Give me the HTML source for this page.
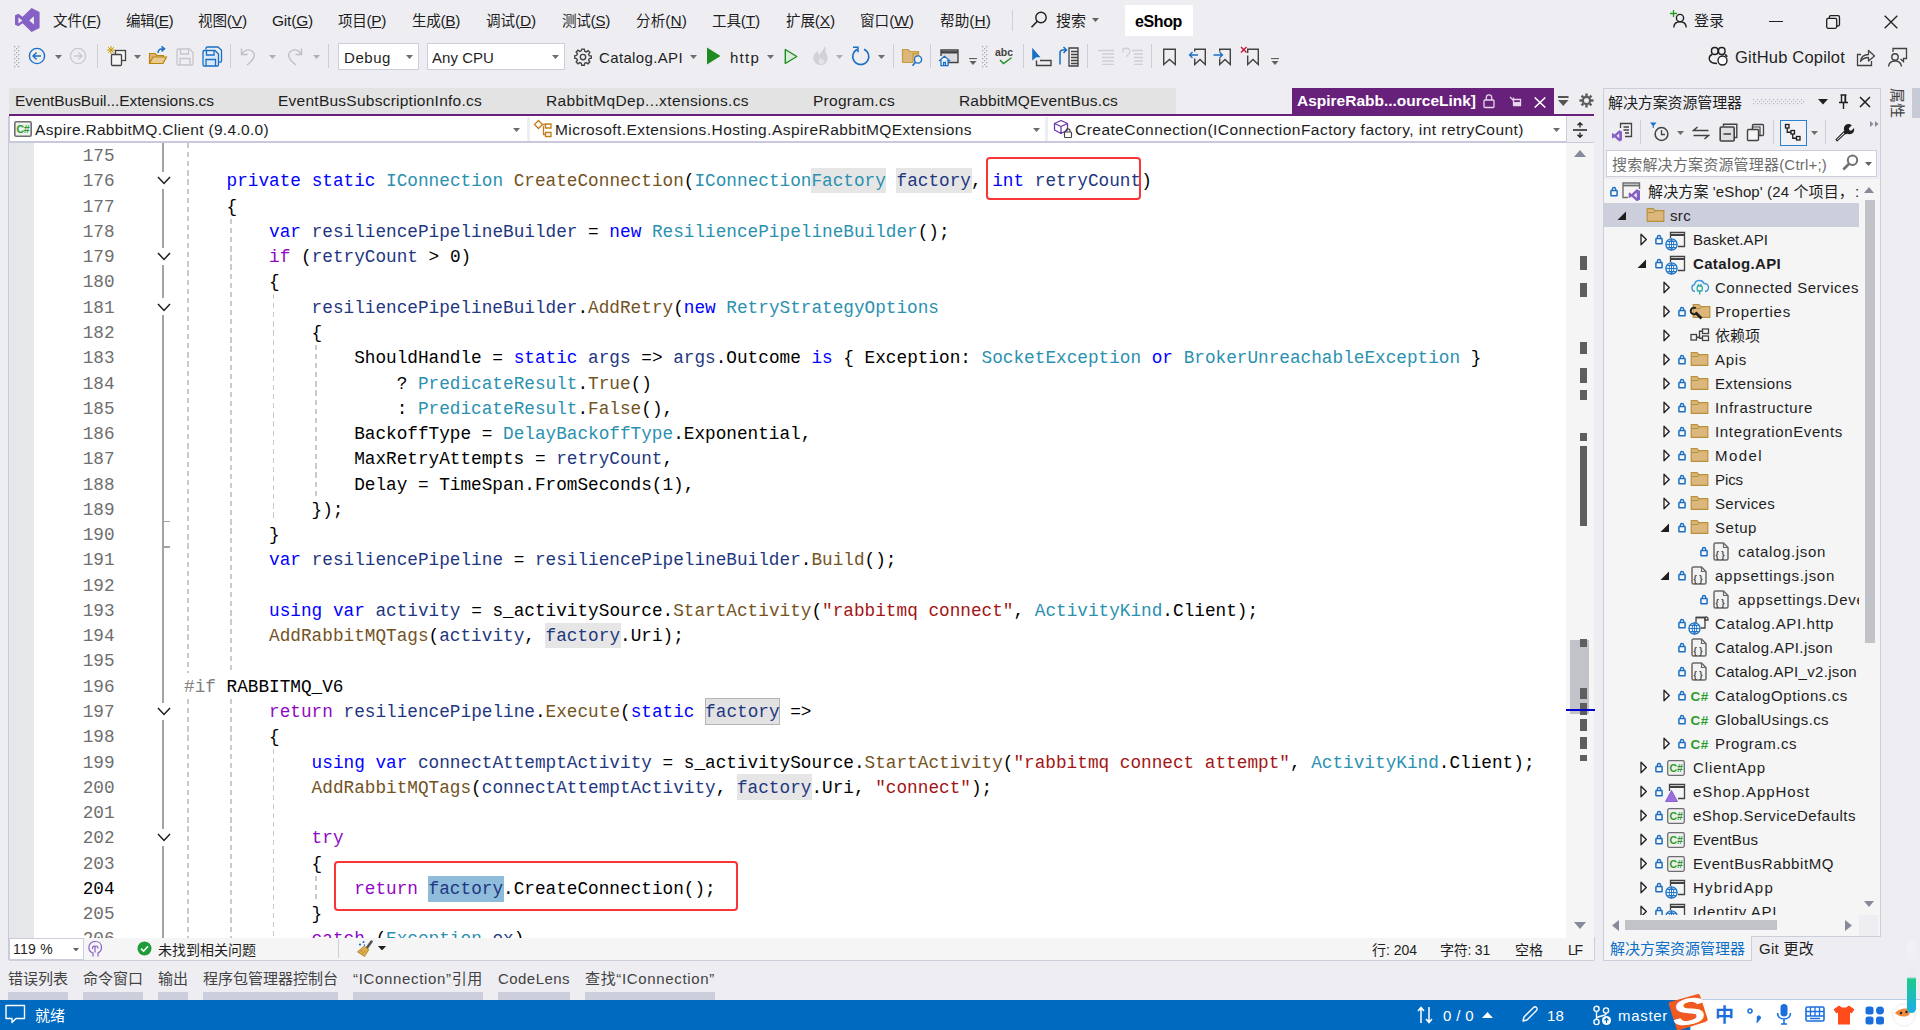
<!DOCTYPE html>
<html lang="zh-CN"><head><meta charset="utf-8"><title>eShop - Microsoft Visual Studio</title><style>
html,body{margin:0;padding:0;}
body{width:1920px;height:1030px;overflow:hidden;background:#EEEEF2;position:relative;font-family:"Liberation Sans","Noto Sans CJK SC",sans-serif;}
.t{position:absolute;white-space:pre;}
.b{position:absolute;display:block;}
.c{position:absolute;white-space:pre;font-family:"Liberation Mono","Noto Sans CJK SC",monospace;font-size:17.725px;line-height:25px;height:25px;color:#000;left:184px;}
.ln{position:absolute;white-space:pre;font-family:"Liberation Mono",monospace;font-size:17.7px;line-height:25px;height:25px;color:#6e6e6e;left:50px;width:65.5px;text-align:right;}
.k{color:#0000ff}.p{color:#8f08c4}.ty{color:#2b91af}.m{color:#74531f}.v{color:#1f377f}.s{color:#a31515}.g{color:#808080}
.hl{background:#e6e6e6}
.clip{position:absolute;overflow:hidden;}
</style></head><body>
<svg class="b" style="left:14.6px;top:7.7px;" width="25" height="24.2" viewBox="0 0 25 24.2"><path d="M16.600 0L24.600 3.900V20.100L16.600 24L7.600 15.300L3.400 18.300L0 16.700V7.300L3.400 5.700L7.600 8.700Z M18.900 8.300L14.300 12.400L18.900 16.500Z M3.400 9.400L7.400 12.400L3.400 15.400Z" fill="#8661c5" fill-rule="evenodd"/></svg>
<span class="t" style="left:53px;top:8.5px;font-size:15.500px;line-height:24px;color:#1e1e1e;letter-spacing:-0.203px;"><span style="font-size:14.600px">文件</span>(<u>F</u>)</span>
<span class="t" style="left:126px;top:8.5px;font-size:15.500px;line-height:24px;color:#1e1e1e;letter-spacing:-0.578px;"><span style="font-size:14.600px">编辑</span>(<u>E</u>)</span>
<span class="t" style="left:198px;top:8.5px;font-size:15.500px;line-height:24px;color:#1e1e1e;letter-spacing:-0.178px;"><span style="font-size:14.600px">视图</span>(<u>V</u>)</span>
<span class="t" style="left:272px;top:8.5px;font-size:15.500px;line-height:24px;color:#1e1e1e;letter-spacing:-0.201px;">Git(<u>G</u>)</span>
<span class="t" style="left:338px;top:8.5px;font-size:15.500px;line-height:24px;color:#1e1e1e;letter-spacing:-0.378px;"><span style="font-size:14.600px">项目</span>(<u>P</u>)</span>
<span class="t" style="left:412px;top:8.5px;font-size:15.500px;line-height:24px;color:#1e1e1e;letter-spacing:-0.378px;"><span style="font-size:14.600px">生成</span>(<u>B</u>)</span>
<span class="t" style="left:486px;top:8.5px;font-size:15.500px;line-height:24px;color:#1e1e1e;letter-spacing:-0.150px;"><span style="font-size:14.600px">调试</span>(<u>D</u>)</span>
<span class="t" style="left:562px;top:8.5px;font-size:15.500px;line-height:24px;color:#1e1e1e;letter-spacing:-0.378px;"><span style="font-size:14.600px">测试</span>(<u>S</u>)</span>
<span class="t" style="left:636px;top:8.5px;font-size:15.500px;line-height:24px;color:#1e1e1e;letter-spacing:0.050px;"><span style="font-size:14.600px">分析</span>(<u>N</u>)</span>
<span class="t" style="left:712px;top:8.5px;font-size:15.500px;line-height:24px;color:#1e1e1e;letter-spacing:-0.203px;"><span style="font-size:14.600px">工具</span>(<u>T</u>)</span>
<span class="t" style="left:786px;top:8.5px;font-size:15.500px;line-height:24px;color:#1e1e1e;letter-spacing:-0.178px;"><span style="font-size:14.600px">扩展</span>(<u>X</u>)</span>
<span class="t" style="left:860px;top:8.5px;font-size:15.500px;line-height:24px;color:#1e1e1e;letter-spacing:-0.037px;"><span style="font-size:14.600px">窗口</span>(<u>W</u>)</span>
<span class="t" style="left:940px;top:8.5px;font-size:15.500px;line-height:24px;color:#1e1e1e;letter-spacing:0.050px;"><span style="font-size:14.600px">帮助</span>(<u>H</u>)</span>
<div class="b" style="left:1012px;top:10px;width:1px;height:21px;background:#d0d0d6;"></div>
<svg class="b" style="left:1030px;top:11px;" width="18" height="18" viewBox="0 0 18 18"><circle cx="11" cy="6.5" r="5.2" fill="none" stroke="#1e1e1e" stroke-width="1.4"/><path d="M7.3 10.3 L1.5 16.3" stroke="#1e1e1e" stroke-width="1.6" fill="none"/></svg>
<span class="t" style="left:1056px;top:8.5px;font-size:15px;line-height:23px;color:#1e1e1e;letter-spacing:-0.008px;">搜索</span>
<svg class="b" style="left:1091.5px;top:18px;" width="7" height="4" viewBox="0 0 7 4"><path d="M0 0H7L3.5 4Z" fill="#616161"/></svg>
<div class="b" style="left:1125px;top:5px;width:68px;height:31px;background:#ffffff;"></div>
<span class="t" style="left:1135px;top:9.7px;font-size:16px;line-height:24px;color:#000;font-weight:bold;letter-spacing:-0.378px;">eShop</span>
<svg class="b" style="left:1669px;top:9px;" width="20" height="20" viewBox="0 0 20 20"><path d="M1 4.5H8M4.5 1V8" stroke="#1f9c1f" stroke-width="1.3"/><circle cx="11" cy="9" r="3.6" fill="none" stroke="#1e1e1e" stroke-width="1.4"/><path d="M4.8 18.5C5 14.6 7.5 12.8 11 12.8S17 14.6 17.2 18.5" fill="none" stroke="#1e1e1e" stroke-width="1.4"/></svg>
<span class="t" style="left:1694px;top:8.5px;font-size:15px;line-height:23px;color:#1e1e1e;letter-spacing:-0.008px;">登录</span>
<div class="b" style="left:1769px;top:21px;width:14px;height:1.3px;background:#1e1e1e;"></div>
<svg class="b" style="left:1826px;top:15px;" width="15" height="15" viewBox="0 0 15 15"><rect x="0.7" y="3.3" width="10" height="10" rx="1.5" fill="none" stroke="#1e1e1e" stroke-width="1.3"/><path d="M3.3 3V2.2A1.5 1.5 0 0 1 4.8 0.7H12A1.5 1.5 0 0 1 13.5 2.2V9.5A1.5 1.5 0 0 1 12 11H11" fill="none" stroke="#1e1e1e" stroke-width="1.3"/></svg>
<svg class="b" style="left:1884px;top:15px;" width="14" height="14" viewBox="0 0 14 14"><path d="M0.7 0.7L13.3 13.3M13.3 0.7L0.7 13.3" stroke="#1e1e1e" stroke-width="1.3"/></svg>
<svg class="b" style="left:14px;top:46px;" width="6" height="22" viewBox="0 0 6 22"><rect x="0" y="0" width="1.300" height="1.300" fill="#a9a9b4"/><rect x="4" y="0" width="1.300" height="1.300" fill="#a9a9b4"/><rect x="2" y="2" width="1.300" height="1.300" fill="#a9a9b4"/><rect x="0" y="4" width="1.300" height="1.300" fill="#a9a9b4"/><rect x="4" y="4" width="1.300" height="1.300" fill="#a9a9b4"/><rect x="2" y="6" width="1.300" height="1.300" fill="#a9a9b4"/><rect x="0" y="8" width="1.300" height="1.300" fill="#a9a9b4"/><rect x="4" y="8" width="1.300" height="1.300" fill="#a9a9b4"/><rect x="2" y="10" width="1.300" height="1.300" fill="#a9a9b4"/><rect x="0" y="12" width="1.300" height="1.300" fill="#a9a9b4"/><rect x="4" y="12" width="1.300" height="1.300" fill="#a9a9b4"/><rect x="2" y="14" width="1.300" height="1.300" fill="#a9a9b4"/><rect x="0" y="16" width="1.300" height="1.300" fill="#a9a9b4"/><rect x="4" y="16" width="1.300" height="1.300" fill="#a9a9b4"/><rect x="2" y="18" width="1.300" height="1.300" fill="#a9a9b4"/><rect x="0" y="20" width="1.300" height="1.300" fill="#a9a9b4"/><rect x="4" y="20" width="1.300" height="1.300" fill="#a9a9b4"/></svg>
<svg class="b" style="left:28px;top:47px;" width="18" height="18" viewBox="0 0 18 18"><circle cx="9" cy="9" r="7.6" fill="none" stroke="#1a6fc4" stroke-width="1.4"/><path d="M13 9H5.3M8.6 5.4L5 9L8.6 12.6" fill="none" stroke="#1a6fc4" stroke-width="1.4"/></svg>
<svg class="b" style="left:54.5px;top:55px;" width="7" height="4" viewBox="0 0 7 4"><path d="M0 0H7L3.5 4Z" fill="#6d6d6d"/></svg>
<svg class="b" style="left:69px;top:47px;" width="18" height="18" viewBox="0 0 18 18"><circle cx="9" cy="9" r="7.6" fill="none" stroke="#c8c8cc" stroke-width="1.3"/><path d="M5 9H12.7M9.4 5.4L13 9L9.4 12.6" fill="none" stroke="#c8c8cc" stroke-width="1.3"/></svg>
<div class="b" style="left:97px;top:44px;width:1px;height:24px;background:#cccedb;"></div>
<svg class="b" style="left:106px;top:45px;" width="22" height="22" viewBox="0 0 22 22"><path d="M5 1V9M1 5H9M2.2 2.2L7.8 7.8M7.8 2.2L2.2 7.8" stroke="#c99700" stroke-width="1"/><rect x="9.5" y="5.5" width="10" height="10" fill="#f5f5f5" stroke="#424242" stroke-width="1.3"/><rect x="5.5" y="9.5" width="10" height="11" rx="1" fill="#f5f5f5" stroke="#424242" stroke-width="1.3"/></svg>
<svg class="b" style="left:133.5px;top:55px;" width="7" height="4" viewBox="0 0 7 4"><path d="M0 0H7L3.5 4Z" fill="#6d6d6d"/></svg>
<svg class="b" style="left:148px;top:46px;" width="21" height="20" viewBox="0 0 21 20"><path d="M1.5 17.5V7.5H7L9 9.5H15.5V11" fill="#dcb67a" stroke="#b8860b" stroke-width="1.2"/><path d="M1.5 17.5L5 11H18.5L15 17.5Z" fill="#e8c98f" stroke="#b8860b" stroke-width="1.2"/><path d="M10 7C10 3.5 12.5 2.5 16 2.7M13.5 0.3L16.5 2.7L13.5 5.4" fill="none" stroke="#1a6fc4" stroke-width="1.5"/></svg>
<svg class="b" style="left:176px;top:48px;" width="18" height="18" viewBox="0 0 18 18"><path d="M1 2.2A1.2 1.2 0 0 1 2.2 1H13.5L17 4.5V15.8A1.2 1.2 0 0 1 15.8 17H2.2A1.2 1.2 0 0 1 1 15.8Z M4.5 1V6H12.5V1 M4 17V10.5H14V17" fill="none" stroke="#c6c6ca" stroke-width="1.3"/></svg>
<svg class="b" style="left:202px;top:46px;" width="21" height="21" viewBox="0 0 21 21"><path d="M4 3.5V2.2A1.2 1.2 0 0 1 5.2 1H16L19.5 4.3V15A1.2 1.2 0 0 1 18.3 16.2H17" fill="none" stroke="#1a6fc4" stroke-width="1.3"/><path d="M1 5.7A1.2 1.2 0 0 1 2.2 4.5H13L16.5 8V18.8A1.2 1.2 0 0 1 15.3 20H2.2A1.2 1.2 0 0 1 1 18.8Z M4.5 4.5V9H12V4.5 M4 20V13.5H13.5V20" fill="#dbe9f7" stroke="#1a6fc4" stroke-width="1.3"/></svg>
<div class="b" style="left:230px;top:44px;width:1px;height:24px;background:#cccedb;"></div>
<svg class="b" style="left:240px;top:47px;" width="18" height="20" viewBox="0 0 18 20"><path d="M1.5 1.5V7.5H7.5M2 7C4 3 9 1.5 12.5 4.5S14.5 12.5 7 18" fill="none" stroke="#c0c0c4" stroke-width="1.4"/></svg>
<svg class="b" style="left:268.5px;top:55px;" width="7" height="4" viewBox="0 0 7 4"><path d="M0 0H7L3.5 4Z" fill="#b0b0b4"/></svg>
<svg class="b" style="left:285px;top:47px;" width="18" height="20" viewBox="0 0 18 20"><path d="M16.5 1.5V7.5H10.5M16 7C14 3 9 1.5 5.5 4.5S3.500 12.500 11 18" fill="none" stroke="#c0c0c4" stroke-width="1.4"/></svg>
<svg class="b" style="left:312.5px;top:55px;" width="7" height="4" viewBox="0 0 7 4"><path d="M0 0H7L3.5 4Z" fill="#b0b0b4"/></svg>
<div class="b" style="left:328px;top:44px;width:1px;height:24px;background:#cccedb;"></div>
<div class="b" style="left:338px;top:43px;width:81px;height:27px;background:#ffffff;border:1px solid #cccedb;box-sizing:border-box;"></div>
<span class="t" style="left:344px;top:45.5px;font-size:15px;line-height:23px;color:#1e1e1e;letter-spacing:0.559px;">Debug</span>
<svg class="b" style="left:405.5px;top:55px;" width="7" height="4" viewBox="0 0 7 4"><path d="M0 0H7L3.5 4Z" fill="#6d6d6d"/></svg>
<div class="b" style="left:427px;top:43px;width:138px;height:27px;background:#ffffff;border:1px solid #cccedb;box-sizing:border-box;"></div>
<span class="t" style="left:432px;top:45.5px;font-size:15px;line-height:23px;color:#1e1e1e;letter-spacing:0.045px;">Any CPU</span>
<svg class="b" style="left:551.5px;top:55px;" width="7" height="4" viewBox="0 0 7 4"><path d="M0 0H7L3.5 4Z" fill="#6d6d6d"/></svg>
<svg class="b" style="left:574px;top:47.5px;" width="18" height="18" viewBox="0 0 20 20"><g fill="none" stroke="#424242" stroke-width="1.5"><circle cx="10" cy="10" r="3"/><path d="M8.6 1.2H11.400L11.900 3.600L13.600 4.300L15.600 2.900L17.600 4.900L16.200 6.900L16.900 8.600L19.200 9V11.400L16.900 11.900L16.200 13.600L17.600 15.600L15.600 17.600L13.600 16.200L11.900 16.900L11.400 19.200H8.600L8.100 16.900L6.400 16.200L4.400 17.600L2.400 15.600L3.800 13.600L3.100 11.900L0.800 11.400V8.600L3.100 8.100L3.800 6.400L2.400 4.400L4.400 2.400L6.400 3.800L8.100 3.100Z"/></g></svg>
<span class="t" style="left:599px;top:45.5px;font-size:15px;line-height:23px;color:#1e1e1e;letter-spacing:0.359px;">Catalog.API</span>
<svg class="b" style="left:689.5px;top:55px;" width="7" height="4" viewBox="0 0 7 4"><path d="M0 0H7L3.5 4Z" fill="#6d6d6d"/></svg>
<svg class="b" style="left:706px;top:47px;" width="16" height="18" viewBox="0 0 16 18"><path d="M1 0.5L14.5 9L1 17.500Z" fill="#1e8c1e"/></svg>
<span class="t" style="left:730px;top:45.5px;font-size:15px;line-height:23px;color:#1e1e1e;letter-spacing:1.242px;">http</span>
<svg class="b" style="left:766.5px;top:55px;" width="7" height="4" viewBox="0 0 7 4"><path d="M0 0H7L3.5 4Z" fill="#6d6d6d"/></svg>
<svg class="b" style="left:784px;top:48px;" width="15" height="17" viewBox="0 0 15 17"><path d="M1.300 1.500L12.800 8.500L1.300 15.500Z" fill="#d9ecd9" stroke="#1e8c1e" stroke-width="1.400" stroke-linejoin="round"/></svg>
<svg class="b" style="left:810px;top:45px;" width="22" height="22" viewBox="0 0 22 22"><path d="M14 1C15 5 10 6.500 9.500 10C7.500 8.500 8 6.500 8.500 5.500C4.500 8 2.500 11.500 3.500 15C4.500 18.500 8 20.500 11.500 20C15.500 19.500 18.500 16 17.500 11.500C17 9 15.500 8 15.500 6C15.500 4 16 3 14 1Z" fill="#d2d2d6"/><path d="M10 13C8 15 8.500 18 11 19C13.500 19 15 17 14 14.500C13 15.500 12 15 12 13.500C11.500 13.500 10.500 13.500 10 13Z" fill="#e4e4e8"/></svg>
<svg class="b" style="left:835.5px;top:55px;" width="7" height="4" viewBox="0 0 7 4"><path d="M0 0H7L3.5 4Z" fill="#b0b0b4"/></svg>
<svg class="b" style="left:850px;top:46px;" width="22" height="21" viewBox="0 0 22 21"><path d="M7.5 3.200A8 8 0 1 0 14 3.200" fill="none" stroke="#1a6fc4" stroke-width="1.5"/><path d="M3 1.200H8V6.200" fill="none" stroke="#1a6fc4" stroke-width="1.5"/></svg>
<svg class="b" style="left:877.5px;top:55px;" width="7" height="4" viewBox="0 0 7 4"><path d="M0 0H7L3.5 4Z" fill="#6d6d6d"/></svg>
<div class="b" style="left:893px;top:44px;width:1px;height:24px;background:#cccedb;"></div>
<svg class="b" style="left:901px;top:47px;" width="23" height="20" viewBox="0 0 23 20"><path d="M1.5 15.500V2.500H7L9 4.500H17.500V9" fill="#dcb67a" stroke="#c49a3c" stroke-width="1.2"/><path d="M1.500 15.500H12V6.500H17.500" fill="#dcb67a" stroke="#c49a3c" stroke-width="1.200"/><circle cx="17" cy="12.500" r="3.600" fill="#eeeef2" stroke="#1a6fc4" stroke-width="1.400"/><path d="M14.500 15.300L11.500 18.800" stroke="#1a6fc4" stroke-width="1.600"/></svg>
<div class="b" style="left:930px;top:44px;width:1px;height:24px;background:#cccedb;"></div>
<svg class="b" style="left:938px;top:47px;" width="22" height="20" viewBox="0 0 22 20"><path d="M9 15.500H20V3H3V9" fill="#dcdce0" stroke="#424242" stroke-width="1.400"/><path d="M3 5.300H20" stroke="#424242" stroke-width="2.400"/><path d="M1 14L6.500 9.300L12 14M3 13V18.700H10V13M5.500 18.700V15.500H7.500V18.700" fill="#fff" stroke="#1a6fc4" stroke-width="1.300"/></svg>
<svg class="b" style="left:968.5px;top:58px;" width="8" height="8" viewBox="0 0 8 8"><path d="M0 0.500H8" stroke="#616161" stroke-width="1.2"/><path d="M0.500 3H7.500L4 7Z" fill="#616161"/></svg>
<svg class="b" style="left:982px;top:46px;" width="6" height="22" viewBox="0 0 6 22"><rect x="0" y="0" width="1.300" height="1.300" fill="#a9a9b4"/><rect x="4" y="0" width="1.300" height="1.300" fill="#a9a9b4"/><rect x="2" y="2" width="1.300" height="1.300" fill="#a9a9b4"/><rect x="0" y="4" width="1.300" height="1.300" fill="#a9a9b4"/><rect x="4" y="4" width="1.300" height="1.300" fill="#a9a9b4"/><rect x="2" y="6" width="1.300" height="1.300" fill="#a9a9b4"/><rect x="0" y="8" width="1.300" height="1.300" fill="#a9a9b4"/><rect x="4" y="8" width="1.300" height="1.300" fill="#a9a9b4"/><rect x="2" y="10" width="1.300" height="1.300" fill="#a9a9b4"/><rect x="0" y="12" width="1.300" height="1.300" fill="#a9a9b4"/><rect x="4" y="12" width="1.300" height="1.300" fill="#a9a9b4"/><rect x="2" y="14" width="1.300" height="1.300" fill="#a9a9b4"/><rect x="0" y="16" width="1.300" height="1.300" fill="#a9a9b4"/><rect x="4" y="16" width="1.300" height="1.300" fill="#a9a9b4"/><rect x="2" y="18" width="1.300" height="1.300" fill="#a9a9b4"/><rect x="0" y="20" width="1.300" height="1.300" fill="#a9a9b4"/><rect x="4" y="20" width="1.300" height="1.300" fill="#a9a9b4"/></svg>
<span class="t" style="left:995px;top:42.75px;font-size:10.5px;line-height:18.5px;color:#424242;font-weight:bold;letter-spacing:-0.031px;">abc</span>
<svg class="b" style="left:999px;top:57px;" width="14" height="8" viewBox="0 0 14 8"><path d="M1 3L4.500 6.500L12.500 0.800" fill="none" stroke="#1e8c1e" stroke-width="1.400"/></svg>
<div class="b" style="left:1023px;top:44px;width:1px;height:24px;background:#cccedb;"></div>
<svg class="b" style="left:1031px;top:47px;" width="22" height="20" viewBox="0 0 22 20"><path d="M1.500 1V13L4.800 10L8 15.500" fill="none" stroke="#1a6fc4" stroke-width="0"/><path d="M1.200 0.800L9.500 10.200L5.300 10.200L1.200 13.500Z" fill="#1a6fc4"/><path d="M5.500 13.500V18.500H20V13.500H9" fill="none" stroke="#424242" stroke-width="1.400"/></svg>
<svg class="b" style="left:1058px;top:46px;" width="22" height="21" viewBox="0 0 22 21"><path d="M2 18.500V7A3 3 0 0 1 5 4H8M5.500 1L8.500 4L5.500 7" fill="none" stroke="#1a6fc4" stroke-width="1.500"/><path d="M11 2H20V20H11Z" fill="none" stroke="#424242" stroke-width="1.3"/><path d="M13 5.500H20M13 8.500H20M13 11.500H20M13 14.500H20M13 17.500H20" stroke="#424242" stroke-width="1.300"/></svg>
<div class="b" style="left:1087px;top:44px;width:1px;height:24px;background:#cccedb;"></div>
<svg class="b" style="left:1097px;top:49px;" width="18" height="16" viewBox="0 0 18 16"><path d="M1 1.500H17M5 5H17M5 8.500H17M5 12H17M5 15.300H17" stroke="#d0d0d4" stroke-width="1.300"/></svg>
<svg class="b" style="left:1122px;top:47px;" width="21" height="18" viewBox="0 0 21 18"><path d="M1 5.500V1.500M1 1.500H5M1.500 2C4 0.500 7.500 1 8 4C8.300 6.500 6 7.500 4.500 9.500" fill="none" stroke="#d0d0d4" stroke-width="1.300"/><path d="M10 3.500H21M12 7H21M12 10.500H21M12 14H21M12 17.300H21" stroke="#d0d0d4" stroke-width="1.300"/></svg>
<div class="b" style="left:1151px;top:44px;width:1px;height:24px;background:#cccedb;"></div>
<svg class="b" style="left:1162px;top:48px;" width="15" height="18" viewBox="0 0 15 18"><path d="M1.700 1.200H13.300V16.500L7.500 11.500L1.700 16.500Z" fill="none" stroke="#424242" stroke-width="1.400"/></svg>
<svg class="b" style="left:1188px;top:48px;" width="19" height="18" viewBox="0 0 19 18"><path d="M6.700 3.500V1.200H17.300V16.500L12 11.500L6.700 16.500V10.500" fill="none" stroke="#424242" stroke-width="1.400"/><path d="M10 7H1.500M4.500 4L1.500 7L4.500 10" fill="none" stroke="#1a6fc4" stroke-width="1.300"/></svg>
<svg class="b" style="left:1213px;top:48px;" width="19" height="18" viewBox="0 0 19 18"><path d="M6.700 3.500V1.200H17.300V16.500L12 11.500L6.700 16.500V10.500" fill="none" stroke="#424242" stroke-width="1.400"/><path d="M0.500 7H9.500M6.500 4L9.500 7L6.500 10" fill="none" stroke="#1a6fc4" stroke-width="1.300"/></svg>
<svg class="b" style="left:1240px;top:46px;" width="20" height="20" viewBox="0 0 20 20"><path d="M7.700 7V3.200H18.300V18.500L13 13.500L7.700 18.500V9.500" fill="none" stroke="#424242" stroke-width="1.400"/><path d="M1 1L6.500 6.500M6.500 1L1 6.500" stroke="#c8102e" stroke-width="1.300"/></svg>
<svg class="b" style="left:1271px;top:58px;" width="8" height="8" viewBox="0 0 8 8"><path d="M0 0.500H8" stroke="#616161" stroke-width="1.2"/><path d="M0.500 3H7.500L4 7Z" fill="#616161"/></svg>
<svg class="b" style="left:1708px;top:46px;" width="22" height="21" viewBox="0 0 22 21"><g fill="none" stroke="#1e1e1e" stroke-width="1.400"><path d="M4 8.500C1.500 9.500 1 12 1.500 14C2.500 16.500 6 17.500 9 17.500"/><rect x="3.500" y="1.500" width="6.500" height="7" rx="3"/><rect x="10.500" y="1.500" width="6.500" height="7" rx="3"/><path d="M17 8.500C18.500 9 19 10 19 11"/></g><circle cx="14.500" cy="14.500" r="4.500" fill="#fff" stroke="#1e1e1e" stroke-width="1.400"/></svg>
<span class="t" style="left:1735px;top:44.75px;font-size:16.5px;line-height:24.5px;color:#1e1e1e;letter-spacing:0.192px;">GitHub Copilot</span>
<svg class="b" style="left:1856px;top:48px;" width="20" height="19" viewBox="0 0 20 19"><path d="M5 6.500H1.500V17.500H15.500V13" fill="none" stroke="#424242" stroke-width="1.300"/><path d="M4.500 13.500C5 9 8 6.500 12.500 6.500V2.500L18.500 8L12.500 13V9.500C9 9.500 6.500 10.500 4.500 13.500Z" fill="none" stroke="#424242" stroke-width="1.300" stroke-linejoin="round"/></svg>
<svg class="b" style="left:1887px;top:47px;" width="21" height="21" viewBox="0 0 21 21"><path d="M6 5V1.500H19.500V11.500H16.500V14.500L13.500 12" fill="none" stroke="#424242" stroke-width="1.300"/><circle cx="8" cy="10" r="3.200" fill="none" stroke="#424242" stroke-width="1.400"/><path d="M1.500 19.500C2 15.500 4.500 14 8 14S14 15.500 14.500 19.500" fill="none" stroke="#424242" stroke-width="1.400"/></svg>
<div class="b" style="left:9px;top:88px;width:1167px;height:26px;background:#e3e3e3;"></div>
<span class="t" style="left:15px;top:89.05px;font-size:15.5px;line-height:23.5px;color:#1e1e1e;letter-spacing:-0.062px;">EventBusBuil...Extensions.cs</span>
<span class="t" style="left:278px;top:89.05px;font-size:15.5px;line-height:23.5px;color:#1e1e1e;letter-spacing:0.248px;">EventBusSubscriptionInfo.cs</span>
<span class="t" style="left:546px;top:89.05px;font-size:15.5px;line-height:23.5px;color:#1e1e1e;letter-spacing:0.385px;">RabbitMqDep...xtensions.cs</span>
<span class="t" style="left:813px;top:89.05px;font-size:15.5px;line-height:23.5px;color:#1e1e1e;letter-spacing:0.275px;">Program.cs</span>
<span class="t" style="left:959px;top:89.05px;font-size:15.5px;line-height:23.5px;color:#1e1e1e;letter-spacing:0.161px;">RabbitMQEventBus.cs</span>
<div class="b" style="left:1292px;top:87.7px;width:262px;height:27px;background:#68217a;"></div>
<span class="t" style="left:1297px;top:89.25px;font-size:15.5px;line-height:23.5px;color:#ffffff;font-weight:bold;letter-spacing:-0.007px;">AspireRabb...ourceLink]</span>
<svg class="b" style="left:1482px;top:93px;" width="14" height="16" viewBox="0 0 14 16"><rect x="2" y="7" width="10" height="7.500" rx="1" fill="none" stroke="#e6d6ec" stroke-width="1.300"/><path d="M4.300 7V4.500A2.700 2.700 0 0 1 9.700 4.500V7" fill="none" stroke="#e6d6ec" stroke-width="1.300"/></svg>
<svg class="b" style="left:1508px;top:96px;" width="14" height="11" viewBox="0 0 14 11"><path d="M2 1L5.500 4.500" stroke="#e6d6ec" stroke-width="1.200"/><path d="M5.500 1.500V10M5.500 3.500H12.500V9.500H5.500" fill="none" stroke="#e6d6ec" stroke-width="1.300"/><path d="M5.500 6H12.500V9.500H5.500Z" fill="#e6d6ec"/></svg>
<svg class="b" style="left:1534px;top:96.5px;" width="12" height="11" viewBox="0 0 12 11"><path d="M0.700 0.500L11.300 10.500M11.300 0.500L0.700 10.500" stroke="#ffffff" stroke-width="1.500"/></svg>
<div class="b" style="left:9px;top:113.8px;width:1585px;height:2.3px;background:#68217a;"></div>
<svg class="b" style="left:1558px;top:96px;" width="11" height="10" viewBox="0 0 11 10"><path d="M0 1H10.500" stroke="#555" stroke-width="2"/><path d="M0 4H10.500L5.250 10Z" fill="#555"/></svg>
<svg class="b" style="left:1578.5px;top:92.5px;" width="15" height="15" viewBox="0 0 15 15"><g fill="none" stroke="#5c5c5c"><circle cx="7.500" cy="7.500" r="3.600" stroke-width="2.200"/><path d="M7.500 0.500V3M7.500 12V14.500M0.500 7.500H3M12 7.500H14.500M2.550 2.550L4.300 4.300M10.700 10.700L12.450 12.450M12.450 2.550L10.700 4.300M4.300 10.700L2.550 12.450" stroke-width="2.400"/></g></svg>
<div class="b" style="left:9px;top:116px;width:1585px;height:26px;background:#ffffff;"></div>
<div class="b" style="left:9px;top:140.7px;width:1585px;height:2.4px;background:#c8cadc;"></div>
<div class="b" style="left:8px;top:116px;width:1.5px;height:844px;background:#c8cadc;"></div>
<svg class="b" style="left:14px;top:121px;" width="18" height="16" viewBox="0 0 18 16"><rect x="0.800" y="0.800" width="16.400" height="14.400" rx="1.500" fill="#f0f0f0" stroke="#6e6e6e" stroke-width="1.600"/></svg>
<span class="t" style="left:16.5px;top:119.75px;font-size:10.5px;line-height:18.5px;color:#2a9c2a;font-weight:bold;letter-spacing:-0.219px;">C#</span>
<span class="t" style="left:35px;top:117.75px;font-size:15.5px;line-height:23.5px;color:#1e1e1e;letter-spacing:0.313px;">Aspire.RabbitMQ.Client (9.4.0.0)</span>
<svg class="b" style="left:512.5px;top:127.5px;" width="7" height="4" viewBox="0 0 7 4"><path d="M0 0H7L3.5 4Z" fill="#6d6d6d"/></svg>
<div class="b" style="left:526.5px;top:117px;width:3px;height:24px;background:#eeeef2;"></div>
<svg class="b" style="left:533px;top:119px;" width="20" height="20" viewBox="0 0 20 20"><g fill="none" stroke="#c27d1a" stroke-width="1.300"><path d="M5.500 1.500L9.500 5.500L5.500 9.500L1.500 5.500Z"/><path d="M12.500 5H18V9H12.500ZM12.500 13.500H18V17.500H12.500Z"/><path d="M9.500 5.500H12.500M10.500 7V15.500H12.500"/></g></svg>
<span class="t" style="left:555px;top:117.75px;font-size:15.5px;line-height:23.5px;color:#1e1e1e;letter-spacing:0.440px;">Microsoft.Extensions.Hosting.AspireRabbitMQExtensions</span>
<svg class="b" style="left:1032.5px;top:127.5px;" width="7" height="4" viewBox="0 0 7 4"><path d="M0 0H7L3.5 4Z" fill="#6d6d6d"/></svg>
<div class="b" style="left:1045.3px;top:117px;width:3px;height:24px;background:#eeeef2;"></div>
<svg class="b" style="left:1053px;top:119px;" width="20" height="20" viewBox="0 0 20 20"><path d="M8 1.500L14.500 4.500V11L8 14.500L1.500 11V4.500Z M1.500 4.500L8 7.500L14.500 4.500M8 7.500V14.500" fill="none" stroke="#6936aa" stroke-width="1.300" stroke-linejoin="round"/><rect x="11.500" y="13" width="7" height="5.500" rx="0.800" fill="#fff" stroke="#424242" stroke-width="1.200"/><path d="M13 13V11.800A2 2 0 0 1 17 11.800V13" fill="none" stroke="#424242" stroke-width="1.200"/></svg>
<span class="t" style="left:1075px;top:117.75px;font-size:15.5px;line-height:23.5px;color:#1e1e1e;letter-spacing:0.467px;">CreateConnection(IConnectionFactory factory, int retryCount)</span>
<svg class="b" style="left:1552.5px;top:127.5px;" width="7" height="4" viewBox="0 0 7 4"><path d="M0 0H7L3.5 4Z" fill="#6d6d6d"/></svg>
<div class="b" style="left:1566px;top:116px;width:28px;height:26px;background:#eeeef2;"></div>
<div class="b" style="left:1566px;top:116px;width:1px;height:26px;background:#cccedb;"></div>
<svg class="b" style="left:1572px;top:121.5px;" width="16" height="16" viewBox="0 0 16 16"><path d="M1 8H15" stroke="#1e1e1e" stroke-width="1.500"/><path d="M8 0.800V5.500M5.500 3.300L8 0.800L10.500 3.300M8 15.200V10.500M5.500 12.700L8 15.200L10.500 12.700" fill="none" stroke="#1e1e1e" stroke-width="1.300"/></svg>
<div class="clip" style="left:9px;top:143px;width:1557px;height:795px;background:#fff;">
<div class="b" style="left:0px;top:0px;width:25px;height:800px;background:#e6e7e8;"></div>
<div class="b" style="left:153.3px;top:0px;width:1.6px;height:800px;background:#a3a3a3;"></div>
<div class="b" style="left:178.4px;top:-0.3px;width:1.500px;height:530.67px;background:repeating-linear-gradient(to bottom,#cacaca 0,#cacaca 5.200px,transparent 5.200px,transparent 9.100px);"></div>
<div class="b" style="left:178.4px;top:555.64px;width:1.500px;height:277.97px;background:repeating-linear-gradient(to bottom,#cacaca 0,#cacaca 5.200px,transparent 5.200px,transparent 9.100px);"></div>
<div class="b" style="left:221.4px;top:75.51px;width:1.500px;height:454.86px;background:repeating-linear-gradient(to bottom,#cacaca 0,#cacaca 5.200px,transparent 5.200px,transparent 9.100px);"></div>
<div class="b" style="left:221.4px;top:555.64px;width:1.500px;height:277.97px;background:repeating-linear-gradient(to bottom,#cacaca 0,#cacaca 5.200px,transparent 5.200px,transparent 9.100px);"></div>
<div class="b" style="left:263.6px;top:151.32px;width:1.500px;height:227.43px;background:repeating-linear-gradient(to bottom,#cacaca 0,#cacaca 5.200px,transparent 5.200px,transparent 9.100px);"></div>
<div class="b" style="left:263.6px;top:606.18px;width:1.500px;height:227.43px;background:repeating-linear-gradient(to bottom,#cacaca 0,#cacaca 5.200px,transparent 5.200px,transparent 9.100px);"></div>
<div class="b" style="left:306.3px;top:201.86px;width:1.500px;height:151.62px;background:repeating-linear-gradient(to bottom,#cacaca 0,#cacaca 5.200px,transparent 5.200px,transparent 9.100px);"></div>
<div class="b" style="left:306.3px;top:732.53px;width:1.500px;height:25.27px;background:repeating-linear-gradient(to bottom,#cacaca 0,#cacaca 5.200px,transparent 5.200px,transparent 9.100px);"></div>
<div class="b" style="left:802.224px;top:24.97px;width:75.252px;height:24.7px;background:#e6e6e6;"></div>
<div class="b" style="left:887.312px;top:24.97px;width:75.252px;height:24.7px;background:#e6e6e6;"></div>
<div class="b" style="left:536.324px;top:479.83px;width:75.252px;height:25.1px;background:#e6e6e6;"></div>
<div class="b" style="left:695.864px;top:554.94px;width:75.252px;height:26.6px;background:#e2e2e2;box-sizing:border-box;border:1px solid #b4b4b4;"></div>
<div class="b" style="left:727.772px;top:631.45px;width:75.252px;height:25.1px;background:#e6e6e6;"></div>
<div class="b" style="left:419.328px;top:732.53px;width:75.252px;height:26px;background:#8fbcdb;"></div>
<div class="ln" style="top:1px;left:40px;">175</div>
<div class="ln" style="top:26px;left:40px;">176</div>
<div class="c" style="top:26px;left:175px;">    <span class="k">private</span> <span class="k">static</span> <span class="ty">IConnection</span> <span class="m">CreateConnection</span>(<span class="ty">IConnectionFactory</span> <span class="v">factory</span>, <span class="k">int</span> <span class="v">retryCount</span>)</div>
<div class="ln" style="top:52px;left:40px;">177</div>
<div class="c" style="top:52px;left:175px;">    {</div>
<div class="ln" style="top:77px;left:40px;">178</div>
<div class="c" style="top:77px;left:175px;">        <span class="k">var</span> <span class="v">resiliencePipelineBuilder</span> = <span class="k">new</span> <span class="ty">ResiliencePipelineBuilder</span>();</div>
<div class="ln" style="top:102px;left:40px;">179</div>
<div class="c" style="top:102px;left:175px;">        <span class="p">if</span> (<span class="v">retryCount</span> &gt; 0)</div>
<div class="ln" style="top:127px;left:40px;">180</div>
<div class="c" style="top:127px;left:175px;">        {</div>
<div class="ln" style="top:153px;left:40px;">181</div>
<div class="c" style="top:153px;left:175px;">            <span class="v">resiliencePipelineBuilder</span>.<span class="m">AddRetry</span>(<span class="k">new</span> <span class="ty">RetryStrategyOptions</span></div>
<div class="ln" style="top:178px;left:40px;">182</div>
<div class="c" style="top:178px;left:175px;">            {</div>
<div class="ln" style="top:203px;left:40px;">183</div>
<div class="c" style="top:203px;left:175px;">                ShouldHandle = <span class="k">static</span> <span class="v">args</span> =&gt; <span class="v">args</span>.Outcome <span class="k">is</span> { Exception: <span class="ty">SocketException</span> <span class="k">or</span> <span class="ty">BrokerUnreachableException</span> }</div>
<div class="ln" style="top:229px;left:40px;">184</div>
<div class="c" style="top:229px;left:175px;">                    ? <span class="ty">PredicateResult</span>.<span class="m">True</span>()</div>
<div class="ln" style="top:254px;left:40px;">185</div>
<div class="c" style="top:254px;left:175px;">                    : <span class="ty">PredicateResult</span>.<span class="m">False</span>(),</div>
<div class="ln" style="top:279px;left:40px;">186</div>
<div class="c" style="top:279px;left:175px;">                BackoffType = <span class="ty">DelayBackoffType</span>.Exponential,</div>
<div class="ln" style="top:304px;left:40px;">187</div>
<div class="c" style="top:304px;left:175px;">                MaxRetryAttempts = <span class="v">retryCount</span>,</div>
<div class="ln" style="top:330px;left:40px;">188</div>
<div class="c" style="top:330px;left:175px;">                Delay = TimeSpan.FromSeconds(1),</div>
<div class="ln" style="top:355px;left:40px;">189</div>
<div class="c" style="top:355px;left:175px;">            });</div>
<div class="ln" style="top:380px;left:40px;">190</div>
<div class="c" style="top:380px;left:175px;">        }</div>
<div class="ln" style="top:405px;left:40px;">191</div>
<div class="c" style="top:405px;left:175px;">        <span class="k">var</span> <span class="v">resiliencePipeline</span> = <span class="v">resiliencePipelineBuilder</span>.<span class="m">Build</span>();</div>
<div class="ln" style="top:431px;left:40px;">192</div>
<div class="ln" style="top:456px;left:40px;">193</div>
<div class="c" style="top:456px;left:175px;">        <span class="k">using</span> <span class="k">var</span> <span class="v">activity</span> = s_activitySource.<span class="m">StartActivity</span>(<span class="s">"rabbitmq connect"</span>, <span class="ty">ActivityKind</span>.Client);</div>
<div class="ln" style="top:481px;left:40px;">194</div>
<div class="c" style="top:481px;left:175px;">        <span class="m">AddRabbitMQTags</span>(<span class="v">activity</span>, <span class="v">factory</span>.Uri);</div>
<div class="ln" style="top:506px;left:40px;">195</div>
<div class="ln" style="top:532px;left:40px;">196</div>
<div class="c" style="top:532px;left:175px;"><span class="g">#if</span> RABBITMQ_V6</div>
<div class="ln" style="top:557px;left:40px;">197</div>
<div class="c" style="top:557px;left:175px;">        <span class="p">return</span> <span class="v">resiliencePipeline</span>.<span class="m">Execute</span>(<span class="k">static</span> <span class="v">factory</span> =&gt;</div>
<div class="ln" style="top:582px;left:40px;">198</div>
<div class="c" style="top:582px;left:175px;">        {</div>
<div class="ln" style="top:608px;left:40px;">199</div>
<div class="c" style="top:608px;left:175px;">            <span class="k">using</span> <span class="k">var</span> <span class="v">connectAttemptActivity</span> = s_activitySource.<span class="m">StartActivity</span>(<span class="s">"rabbitmq connect attempt"</span>, <span class="ty">ActivityKind</span>.Client);</div>
<div class="ln" style="top:633px;left:40px;">200</div>
<div class="c" style="top:633px;left:175px;">            <span class="m">AddRabbitMQTags</span>(<span class="v">connectAttemptActivity</span>, <span class="v">factory</span>.Uri, <span class="s">"connect"</span>);</div>
<div class="ln" style="top:658px;left:40px;">201</div>
<div class="ln" style="top:683px;left:40px;">202</div>
<div class="c" style="top:683px;left:175px;">            <span class="p">try</span></div>
<div class="ln" style="top:709px;left:40px;">203</div>
<div class="c" style="top:709px;left:175px;">            {</div>
<div class="ln" style="top:734px;left:40px;color:#000;">204</div>
<div class="c" style="top:734px;left:175px;">                <span class="p">return</span> <span class="v">factory</span>.CreateConnection();</div>
<div class="ln" style="top:759px;left:40px;">205</div>
<div class="c" style="top:759px;left:175px;">            }</div>
<div class="ln" style="top:784px;left:40px;">206</div>
<div class="c" style="top:784px;left:175px;">            <span class="p">catch</span> (<span class="ty">Exception</span> <span class="v">ex</span>)</div>
<div class="b" style="left:149px;top:28.97px;width:11px;height:17px;background:#ffffff;"></div>
<svg class="b" style="left:147.5px;top:33.47px" width="14" height="9" viewBox="0 0 14 9"><path d="M1 1L7 7.500L13 1" fill="none" stroke="#1e1e1e" stroke-width="1.500"/></svg>
<div class="b" style="left:149px;top:104.78px;width:11px;height:17px;background:#ffffff;"></div>
<svg class="b" style="left:147.5px;top:109.28px" width="14" height="9" viewBox="0 0 14 9"><path d="M1 1L7 7.500L13 1" fill="none" stroke="#1e1e1e" stroke-width="1.500"/></svg>
<div class="b" style="left:149px;top:155.32px;width:11px;height:17px;background:#ffffff;"></div>
<svg class="b" style="left:147.5px;top:159.82px" width="14" height="9" viewBox="0 0 14 9"><path d="M1 1L7 7.500L13 1" fill="none" stroke="#1e1e1e" stroke-width="1.500"/></svg>
<div class="b" style="left:149px;top:559.64px;width:11px;height:17px;background:#ffffff;"></div>
<svg class="b" style="left:147.5px;top:564.14px" width="14" height="9" viewBox="0 0 14 9"><path d="M1 1L7 7.500L13 1" fill="none" stroke="#1e1e1e" stroke-width="1.500"/></svg>
<div class="b" style="left:149px;top:685.99px;width:11px;height:17px;background:#ffffff;"></div>
<svg class="b" style="left:147.5px;top:690.49px" width="14" height="9" viewBox="0 0 14 9"><path d="M1 1L7 7.500L13 1" fill="none" stroke="#1e1e1e" stroke-width="1.500"/></svg>
<div class="b" style="left:154px;top:377.95px;width:7px;height:1.4px;background:#a3a3a3;"></div>
<div class="b" style="left:154px;top:403.22px;width:7px;height:1.4px;background:#a3a3a3;"></div>
<div class="b" style="left:977px;top:14.3px;width:155.3px;height:42.5px;border:2.500px solid #fb3535;border-radius:4px;box-sizing:border-box;"></div>
<div class="b" style="left:325.3px;top:718px;width:403.6px;height:50.4px;border:2.500px solid #fb3535;border-radius:4px;box-sizing:border-box;"></div>
</div>
<div class="b" style="left:1566px;top:143px;width:28px;height:795px;background:#f5f5f5;"></div>
<svg class="b" style="left:1574px;top:150px;" width="12" height="7" viewBox="0 0 12 7"><path d="M0 7L6 0L12 7Z" fill="#868999"/></svg>
<svg class="b" style="left:1574px;top:922px;" width="12" height="7" viewBox="0 0 12 7"><path d="M0 0H12L6 7Z" fill="#868999"/></svg>
<div class="b" style="left:1570px;top:640px;width:19px;height:74px;background:#c2c3c9;"></div>
<div class="b" style="left:1580px;top:256px;width:7px;height:14px;background:#5e5e5e;"></div>
<div class="b" style="left:1580px;top:283px;width:7px;height:14px;background:#5e5e5e;"></div>
<div class="b" style="left:1580px;top:342px;width:7px;height:12px;background:#5e5e5e;"></div>
<div class="b" style="left:1580px;top:368px;width:7px;height:15px;background:#5e5e5e;"></div>
<div class="b" style="left:1580px;top:390px;width:7px;height:10px;background:#5e5e5e;"></div>
<div class="b" style="left:1580px;top:433px;width:7px;height:8px;background:#5e5e5e;"></div>
<div class="b" style="left:1580px;top:446px;width:7px;height:80px;background:#5e5e5e;"></div>
<div class="b" style="left:1580px;top:639px;width:7px;height:8px;background:#5e5e5e;"></div>
<div class="b" style="left:1580px;top:688px;width:7px;height:11px;background:#5e5e5e;"></div>
<div class="b" style="left:1580px;top:703px;width:7px;height:12px;background:#5e5e5e;"></div>
<div class="b" style="left:1580px;top:719px;width:7px;height:12px;background:#5e5e5e;"></div>
<div class="b" style="left:1580px;top:737px;width:7px;height:12px;background:#5e5e5e;"></div>
<div class="b" style="left:1580px;top:755px;width:7px;height:6px;background:#5e5e5e;"></div>
<div class="b" style="left:1566px;top:708.5px;width:29px;height:2px;background:#0000cd;"></div>
<div class="b" style="left:9px;top:938px;width:1585px;height:22px;background:#f5f5f5;"></div>
<div class="b" style="left:9px;top:959.5px;width:1585px;height:1px;background:#cccedb;"></div>
<div class="b" style="left:1593.5px;top:937px;width:1px;height:23px;background:#cccedb;"></div>
<div class="b" style="left:9px;top:938px;width:75px;height:22px;background:#ffffff;border:1px solid #cccedb;box-sizing:border-box;"></div>
<span class="t" style="left:13px;top:938px;font-size:14px;line-height:22px;color:#1e1e1e;letter-spacing:0.266px;">119 %</span>
<svg class="b" style="left:73px;top:947.75px;" width="6" height="3.5" viewBox="0 0 6 3.5"><path d="M0 0H6L3 3.5Z" fill="#616161"/></svg>
<svg class="b" style="left:87px;top:940px;" width="16" height="18" viewBox="0 0 16 18"><g fill="none" stroke="#8a5fc7" stroke-width="1.200"><path d="M6 16.500V13C3 12 1.500 9.500 2 6.500C2.500 3.500 5 1.500 8.500 1.500S14.500 4 14.500 7.500C14.500 10 13 12 11 13V16.500"/><path d="M8 12.500V6.500M5.500 9C5.500 6 7 5.500 8 6.500C9 5.500 11 6 11 8.500"/></g></svg>
<svg class="b" style="left:137px;top:941px;" width="15" height="15" viewBox="0 0 15 15"><circle cx="7.500" cy="7.500" r="7" fill="#1f9c3a"/><path d="M4 7.700L6.600 10.200L11 5.300" fill="none" stroke="#fff" stroke-width="1.600"/></svg>
<span class="t" style="left:158px;top:938.5px;font-size:14px;line-height:22px;color:#1e1e1e;letter-spacing:0.000px;">未找到相关问题</span>
<div class="b" style="left:338px;top:939px;width:1px;height:19px;background:#cccedb;"></div>
<svg class="b" style="left:356px;top:940px;" width="18" height="18" viewBox="0 0 18 18"><path d="M15.500 1.500L10.500 8.500" stroke="#555" stroke-width="2.600" stroke-linecap="round"/><path d="M8.200 6.200L12.800 9.600L8.500 16.500L1.500 11.800Z" fill="#e0b050" stroke="#a97f2a" stroke-width="0.900" stroke-linejoin="round"/><path d="M4 12.500L6.500 9.500M6.500 14L9 10.500" stroke="#a97f2a" stroke-width="0.800"/><circle cx="4" cy="4.500" r="1.100" fill="#1a6fc4"/><circle cx="7.500" cy="2" r="1" fill="#1a6fc4"/><circle cx="8.500" cy="5" r="0.800" fill="#1a6fc4"/></svg>
<svg class="b" style="left:378px;top:945.75px;" width="8" height="4.5" viewBox="0 0 8 4.5"><path d="M0 0H8L4 4.5Z" fill="#1e1e1e"/></svg>
<span class="t" style="left:1372px;top:938.5px;font-size:14px;line-height:22px;color:#1e1e1e;letter-spacing:-0.023px;">行: 204</span>
<span class="t" style="left:1440px;top:938.5px;font-size:14px;line-height:22px;color:#1e1e1e;letter-spacing:-0.227px;">字符: 31</span>
<span class="t" style="left:1515px;top:938.5px;font-size:14px;line-height:22px;color:#1e1e1e;letter-spacing:0.000px;">空格</span>
<span class="t" style="left:1568px;top:938.5px;font-size:14px;line-height:22px;color:#1e1e1e;letter-spacing:-1.172px;">LF</span>
<div class="b" style="left:1603px;top:88px;width:278px;height:849px;background:#eeeef2;border:1px solid #cccedb;box-sizing:border-box;"></div>
<div class="b" style="left:1604px;top:179px;width:276px;height:757px;background:#f5f5f5;"></div>
<span class="t" style="left:1608px;top:90.5px;font-size:15px;line-height:23px;color:#1e1e1e;letter-spacing:-0.113px;">解决方案资源管理器</span>
<svg class="b" style="left:1753px;top:99px;" width="54" height="6" viewBox="0 0 54 6"><rect x="0" y="0" width="1.2" height="1.2" fill="#b4b4bc"/><rect x="2" y="2" width="1.2" height="1.2" fill="#b4b4bc"/><rect x="0" y="4" width="1.2" height="1.2" fill="#b4b4bc"/><rect x="4" y="0" width="1.2" height="1.2" fill="#b4b4bc"/><rect x="6" y="2" width="1.2" height="1.2" fill="#b4b4bc"/><rect x="4" y="4" width="1.2" height="1.2" fill="#b4b4bc"/><rect x="8" y="0" width="1.2" height="1.2" fill="#b4b4bc"/><rect x="10" y="2" width="1.2" height="1.2" fill="#b4b4bc"/><rect x="8" y="4" width="1.2" height="1.2" fill="#b4b4bc"/><rect x="12" y="0" width="1.2" height="1.2" fill="#b4b4bc"/><rect x="14" y="2" width="1.2" height="1.2" fill="#b4b4bc"/><rect x="12" y="4" width="1.2" height="1.2" fill="#b4b4bc"/><rect x="16" y="0" width="1.2" height="1.2" fill="#b4b4bc"/><rect x="18" y="2" width="1.2" height="1.2" fill="#b4b4bc"/><rect x="16" y="4" width="1.2" height="1.2" fill="#b4b4bc"/><rect x="20" y="0" width="1.2" height="1.2" fill="#b4b4bc"/><rect x="22" y="2" width="1.2" height="1.2" fill="#b4b4bc"/><rect x="20" y="4" width="1.2" height="1.2" fill="#b4b4bc"/><rect x="24" y="0" width="1.2" height="1.2" fill="#b4b4bc"/><rect x="26" y="2" width="1.2" height="1.2" fill="#b4b4bc"/><rect x="24" y="4" width="1.2" height="1.2" fill="#b4b4bc"/><rect x="28" y="0" width="1.2" height="1.2" fill="#b4b4bc"/><rect x="30" y="2" width="1.2" height="1.2" fill="#b4b4bc"/><rect x="28" y="4" width="1.2" height="1.2" fill="#b4b4bc"/><rect x="32" y="0" width="1.2" height="1.2" fill="#b4b4bc"/><rect x="34" y="2" width="1.2" height="1.2" fill="#b4b4bc"/><rect x="32" y="4" width="1.2" height="1.2" fill="#b4b4bc"/><rect x="36" y="0" width="1.2" height="1.2" fill="#b4b4bc"/><rect x="38" y="2" width="1.2" height="1.2" fill="#b4b4bc"/><rect x="36" y="4" width="1.2" height="1.2" fill="#b4b4bc"/><rect x="40" y="0" width="1.2" height="1.2" fill="#b4b4bc"/><rect x="42" y="2" width="1.2" height="1.2" fill="#b4b4bc"/><rect x="40" y="4" width="1.2" height="1.2" fill="#b4b4bc"/><rect x="44" y="0" width="1.2" height="1.2" fill="#b4b4bc"/><rect x="46" y="2" width="1.2" height="1.2" fill="#b4b4bc"/><rect x="44" y="4" width="1.2" height="1.2" fill="#b4b4bc"/><rect x="48" y="0" width="1.2" height="1.2" fill="#b4b4bc"/><rect x="50" y="2" width="1.2" height="1.2" fill="#b4b4bc"/><rect x="48" y="4" width="1.2" height="1.2" fill="#b4b4bc"/></svg>
<svg class="b" style="left:1817.5px;top:99.25px;" width="10" height="5.5" viewBox="0 0 10 5.5"><path d="M0 0H10L5 5.5Z" fill="#1e1e1e"/></svg>
<svg class="b" style="left:1838px;top:94px;" width="11" height="16" viewBox="0 0 11 16"><path d="M2.500 1H8.500M3.500 1V8M7.500 1V8M1 8.500H10M5.500 8.500V15" fill="none" stroke="#1e1e1e" stroke-width="1.400"/><path d="M6.500 1.500H7.500V8H6.500Z" fill="#1e1e1e"/></svg>
<svg class="b" style="left:1859px;top:96px;" width="12" height="12" viewBox="0 0 12 12"><path d="M1 1L11 11M11 1L1 11" stroke="#1e1e1e" stroke-width="1.500"/></svg>
<svg class="b" style="left:1611px;top:122px;" width="22" height="21" viewBox="0 0 22 21"><path d="M9.500 6V1.500H20.500V14.500H14" fill="none" stroke="#424242" stroke-width="1.300"/><path d="M12.500 5H18M12.500 8H18M14 11H18" stroke="#424242" stroke-width="1.300"/><path d="M8.200 8.200L11 9.500V18.200L8.200 19.500L3.600 15.200L1.800 16.600L1 16.100V11.600L1.800 11.100L3.600 12.500Z M8.200 11.500L5.600 13.850L8.200 16.200Z" fill="#8661c5" fill-rule="evenodd"/></svg>
<div class="b" style="left:1640px;top:120px;width:1px;height:24px;background:#cccedb;"></div>
<svg class="b" style="left:1650px;top:121px;" width="22" height="22" viewBox="0 0 22 22"><path d="M0 1.500H6.500L3.800 4.800V7H2.700V4.800Z" fill="#1a6fc4"/><circle cx="11.500" cy="13" r="6.400" fill="none" stroke="#424242" stroke-width="1.500"/><path d="M11.500 9V13.500H15" fill="none" stroke="#424242" stroke-width="1.300"/></svg>
<svg class="b" style="left:1676.5px;top:131px;" width="7" height="4" viewBox="0 0 7 4"><path d="M0 0H7L3.5 4Z" fill="#6d6d6d"/></svg>
<svg class="b" style="left:1692px;top:126px;" width="18" height="14" viewBox="0 0 18 14"><path d="M16.500 4.500H1.500L5.500 1M1.500 9.500H16.500L12.500 13" fill="none" stroke="#424242" stroke-width="1.500"/></svg>
<svg class="b" style="left:1719px;top:123px;" width="19" height="19" viewBox="0 0 19 19"><path d="M4.500 3V1.200H17.800V14.500H16" fill="none" stroke="#424242" stroke-width="1.400"/><rect x="1.200" y="4" width="14" height="14" rx="1" fill="#dedee2" stroke="#424242" stroke-width="1.600"/><path d="M4.500 11H12" stroke="#424242" stroke-width="1.600"/></svg>
<svg class="b" style="left:1746px;top:123px;" width="19" height="19" viewBox="0 0 19 19"><rect x="6.500" y="1.500" width="11" height="11" rx="1" fill="none" stroke="#424242" stroke-width="1.300"/><rect x="1.500" y="6.500" width="11" height="11" rx="1" fill="#f5f5f5" stroke="#424242" stroke-width="1.400"/><path d="M6.500 6.500V4H14V12.500H12.500" fill="none" stroke="#424242" stroke-width="1.200"/></svg>
<div class="b" style="left:1773px;top:120px;width:1px;height:24px;background:#cccedb;"></div>
<div class="b" style="left:1780px;top:119.5px;width:27px;height:26.5px;background:#f1f1f6;border:1px solid #2b7fd1;box-sizing:border-box;"></div>
<svg class="b" style="left:1784px;top:123px;" width="18" height="19" viewBox="0 0 18 19"><g fill="none" stroke="#1e1e1e" stroke-width="1.300"><rect x="1.500" y="1.500" width="3.500" height="3.500"/><rect x="7" y="7.500" width="3.500" height="3.500"/><rect x="12.500" y="13.500" width="3.500" height="3.500"/><path d="M3.250 5V9.250H7M8.750 11V15.250H12.500"/></g></svg>
<svg class="b" style="left:1810.5px;top:131px;" width="7" height="4" viewBox="0 0 7 4"><path d="M0 0H7L3.5 4Z" fill="#6d6d6d"/></svg>
<div class="b" style="left:1825px;top:120px;width:1px;height:24px;background:#cccedb;"></div>
<svg class="b" style="left:1835px;top:123px;" width="20" height="20" viewBox="0 0 20 20"><path d="M2.200 17.800L1 16.600L9.500 8.100L11 9.600Z" fill="#fff" stroke="#1e1e1e" stroke-width="1.100" stroke-linejoin="round"/><path d="M16.800 2.200L13.800 5.200L14.400 7.200L16.300 7.700L19 5C19.500 7 19 9 17.500 10.200C16 11.400 13.800 11.600 12.300 10.800L10.600 11.400L8.700 9.500L9.300 7.700C8.500 6 8.800 3.800 10.300 2.300C11.900 0.800 14.500 0.700 16.800 2.200Z" fill="#1e1e1e"/></svg>
<svg class="b" style="left:1870px;top:121px;" width="9" height="6" viewBox="0 0 9 6"><path d="M0 0L3.500 3L0 6ZM5 0L8.500 3L5 6Z" fill="#868999"/></svg>
<div class="b" style="left:1606px;top:150px;width:271px;height:27px;background:#ffffff;border:1px solid #cccedb;box-sizing:border-box;"></div>
<span class="t" style="left:1612px;top:152.5px;font-size:15px;line-height:23px;color:#6d6d6d;letter-spacing:0.197px;">搜索解决方案资源管理器(Ctrl+;)</span>
<svg class="b" style="left:1841px;top:154px;" width="18" height="18" viewBox="0 0 18 18"><circle cx="11.500" cy="6.200" r="4.700" fill="none" stroke="#717171" stroke-width="2"/><path d="M8.300 9.500L2.300 15.500" stroke="#717171" stroke-width="2.600"/></svg>
<svg class="b" style="left:1865px;top:162px;" width="7" height="4" viewBox="0 0 7 4"><path d="M0 0H7L3.5 4Z" fill="#616161"/></svg>
<div class="clip" style="left:1604px;top:179px;width:255px;height:736px;">
<svg class="b" style="left:5.5px;top:6.5px" width="8" height="11" viewBox="0 0 8 11"><rect x="0.900" y="4.600" width="6.200" height="5.200" rx="0.600" fill="none" stroke="#1a6fc4" stroke-width="1.500"/><path d="M2.300 4.600V3.200A1.700 1.700 0 0 1 5.700 3.200V4.600" fill="none" stroke="#1a6fc4" stroke-width="1.300"/></svg>
<svg class="b" style="left:17px;top:2px" width="21" height="21" viewBox="0 0 21 21"><path d="M7 16.500H2V2H18.500V8" fill="none" stroke="#6e6e6e" stroke-width="1.400"/><path d="M2 4.500H18.500" stroke="#6e6e6e" stroke-width="1.800"/><path d="M15.700 8.200L19 9.700V18.800L15.700 20.300L10.600 15.600L8.600 17.100L7.700 16.600V11.900L8.600 11.400L10.600 12.900Z M15.800 11.700L12.700 14.250L15.800 16.800Z" fill="#8661c5" fill-rule="evenodd"/></svg>
<span class="t" style="left:44px;top:1px;font-size:15px;line-height:24px;color:#1e1e1e;letter-spacing:0.129px;">解决方案 'eShop' (24 个项目，</span>
<span class="t" style="left:251px;top:1px;font-size:15px;line-height:24px;color:#1e1e1e;">:</span>
<div class="b" style="left:0px;top:24px;width:255px;height:24px;background:#cccedb;"></div>
<svg class="b" style="left:12.5px;top:31.5px" width="10" height="10" viewBox="0 0 10 10"><path d="M9 0.500V9H0.500Z" fill="#1e1e1e"/></svg>
<svg class="b" style="left:41.5px;top:28px" width="19" height="16" viewBox="0 0 19 16"><path d="M1.200 14.300V1.700H7L9 3.700H17.800V14.300Z" fill="#dcb67a" stroke="#b8913c" stroke-width="1.200"/><path d="M1.200 5.500H8L9.500 3.700" fill="none" stroke="#b8913c" stroke-width="1"/></svg>
<span class="t" style="left:66px;top:25px;font-size:15px;line-height:24px;color:#1e1e1e;letter-spacing:0.333px;">src</span>
<svg class="b" style="left:35.5px;top:53.5px" width="8" height="13" viewBox="0 0 8 13"><path d="M1 1.200L6.300 6.500L1 11.800Z" fill="none" stroke="#1e1e1e" stroke-width="1.300" stroke-linejoin="round"/></svg>
<svg class="b" style="left:50.5px;top:54.5px" width="8" height="11" viewBox="0 0 8 11"><rect x="0.900" y="4.600" width="6.200" height="5.200" rx="0.600" fill="none" stroke="#1a6fc4" stroke-width="1.500"/><path d="M2.300 4.600V3.200A1.700 1.700 0 0 1 5.700 3.200V4.600" fill="none" stroke="#1a6fc4" stroke-width="1.300"/></svg>
<svg class="b" style="left:60.5px;top:52px" width="21" height="20" viewBox="0 0 21 20"><path d="M5.500 7V1.500H19.500V15.500H13" fill="none" stroke="#424242" stroke-width="1.300"/><path d="M5.500 4H19.500" stroke="#424242" stroke-width="2"/><circle cx="6.500" cy="13.500" r="5.600" fill="#eaf3fc" stroke="#1a6fc4" stroke-width="1.300"/><path d="M1 13.500H12M6.500 8V19M2.300 10.500H10.700M2.300 16.500H10.700M6.500 8C3.500 10 3.500 17 6.500 19M6.500 8C9.500 10 9.500 17 6.500 19" fill="none" stroke="#1a6fc4" stroke-width="0.900"/></svg>
<span class="t" style="left:89px;top:49px;font-size:15px;line-height:24px;color:#1e1e1e;letter-spacing:0.080px;">Basket.API</span>
<svg class="b" style="left:33px;top:79.5px" width="10" height="10" viewBox="0 0 10 10"><path d="M9 0.500V9H0.500Z" fill="#1e1e1e"/></svg>
<svg class="b" style="left:50.5px;top:78.5px" width="8" height="11" viewBox="0 0 8 11"><rect x="0.900" y="4.600" width="6.200" height="5.200" rx="0.600" fill="none" stroke="#1a6fc4" stroke-width="1.500"/><path d="M2.300 4.600V3.200A1.700 1.700 0 0 1 5.700 3.200V4.600" fill="none" stroke="#1a6fc4" stroke-width="1.300"/></svg>
<svg class="b" style="left:60.5px;top:76px" width="21" height="20" viewBox="0 0 21 20"><path d="M5.500 7V1.500H19.500V15.500H13" fill="none" stroke="#424242" stroke-width="1.300"/><path d="M5.500 4H19.500" stroke="#424242" stroke-width="2"/><circle cx="6.500" cy="13.500" r="5.600" fill="#eaf3fc" stroke="#1a6fc4" stroke-width="1.300"/><path d="M1 13.500H12M6.500 8V19M2.300 10.500H10.700M2.300 16.500H10.700M6.500 8C3.500 10 3.500 17 6.500 19M6.500 8C9.500 10 9.500 17 6.500 19" fill="none" stroke="#1a6fc4" stroke-width="0.900"/></svg>
<span class="t" style="left:89px;top:73px;font-size:15px;line-height:24px;color:#1e1e1e;font-weight:bold;letter-spacing:0.347px;">Catalog.API</span>
<svg class="b" style="left:58.5px;top:101.5px" width="8" height="13" viewBox="0 0 8 13"><path d="M1 1.200L6.300 6.500L1 11.800Z" fill="none" stroke="#1e1e1e" stroke-width="1.300" stroke-linejoin="round"/></svg>
<svg class="b" style="left:86px;top:100px" width="20" height="17" viewBox="0 0 20 17"><path d="M5 12.500A3.600 3.600 0 0 1 4.500 5.500A5 5 0 0 1 14 4.500A4 4 0 0 1 15 12.500" fill="none" stroke="#3a96dd" stroke-width="1.400"/><rect x="7.200" y="7" width="5" height="5" rx="1" fill="none" stroke="#2aa7a0" stroke-width="1.300"/><path d="M8.500 7V5M11 7V5M9.700 12V15.500" stroke="#2aa7a0" stroke-width="1.300"/></svg>
<span class="t" style="left:111px;top:97px;font-size:15px;line-height:24px;color:#1e1e1e;letter-spacing:0.542px;">Connected Services</span>
<svg class="b" style="left:58.5px;top:125.5px" width="8" height="13" viewBox="0 0 8 13"><path d="M1 1.200L6.300 6.500L1 11.800Z" fill="none" stroke="#1e1e1e" stroke-width="1.300" stroke-linejoin="round"/></svg>
<svg class="b" style="left:74px;top:126.5px" width="8" height="11" viewBox="0 0 8 11"><rect x="0.900" y="4.600" width="6.200" height="5.200" rx="0.600" fill="none" stroke="#1a6fc4" stroke-width="1.500"/><path d="M2.300 4.600V3.200A1.700 1.700 0 0 1 5.700 3.200V4.600" fill="none" stroke="#1a6fc4" stroke-width="1.300"/></svg>
<svg class="b" style="left:88px;top:124px" width="19" height="16" viewBox="0 0 19 16"><path d="M1.200 14.300V1.700H7L9 3.700H17.800V14.300Z" fill="#dcb67a" stroke="#b8913c" stroke-width="1.200"/><path d="M1.200 5.500H8L9.500 3.700" fill="none" stroke="#b8913c" stroke-width="1"/></svg>
<svg class="b" style="left:85px;top:127px" width="14" height="14" viewBox="0 0 14 14"><path d="M12.500 12.500L6.500 6.500" stroke="#1e1e1e" stroke-width="2.600"/><path d="M6.800 2.200A3.300 3.300 0 1 0 7.800 6.800" fill="none" stroke="#1e1e1e" stroke-width="2"/></svg>
<span class="t" style="left:111px;top:121px;font-size:15px;line-height:24px;color:#1e1e1e;letter-spacing:0.762px;">Properties</span>
<svg class="b" style="left:58.5px;top:149.5px" width="8" height="13" viewBox="0 0 8 13"><path d="M1 1.200L6.300 6.500L1 11.800Z" fill="none" stroke="#1e1e1e" stroke-width="1.300" stroke-linejoin="round"/></svg>
<svg class="b" style="left:86px;top:149px" width="20" height="14" viewBox="0 0 20 14"><g fill="none" stroke="#424242" stroke-width="1.300"><rect x="1" y="6.500" width="5.500" height="5.500"/><rect x="12.500" y="1" width="6" height="4.500"/><rect x="12.500" y="8" width="6" height="4.500"/><path d="M6.500 9.250H9.500V3.250H12.500M9.500 9.250V10.250H12.500"/></g></svg>
<span class="t" style="left:111px;top:145px;font-size:15px;line-height:24px;color:#1e1e1e;letter-spacing:-0.005px;">依赖项</span>
<svg class="b" style="left:58.5px;top:173.5px" width="8" height="13" viewBox="0 0 8 13"><path d="M1 1.200L6.300 6.500L1 11.800Z" fill="none" stroke="#1e1e1e" stroke-width="1.300" stroke-linejoin="round"/></svg>
<svg class="b" style="left:74px;top:174.5px" width="8" height="11" viewBox="0 0 8 11"><rect x="0.900" y="4.600" width="6.200" height="5.200" rx="0.600" fill="none" stroke="#1a6fc4" stroke-width="1.500"/><path d="M2.300 4.600V3.200A1.700 1.700 0 0 1 5.700 3.200V4.600" fill="none" stroke="#1a6fc4" stroke-width="1.300"/></svg>
<svg class="b" style="left:86px;top:172px" width="19" height="16" viewBox="0 0 19 16"><path d="M1.200 14.300V1.700H7L9 3.700H17.800V14.300Z" fill="#dcb67a" stroke="#b8913c" stroke-width="1.200"/><path d="M1.200 5.500H8L9.500 3.700" fill="none" stroke="#b8913c" stroke-width="1"/></svg>
<span class="t" style="left:111px;top:169px;font-size:15px;line-height:24px;color:#1e1e1e;letter-spacing:0.703px;">Apis</span>
<svg class="b" style="left:58.5px;top:197.5px" width="8" height="13" viewBox="0 0 8 13"><path d="M1 1.200L6.300 6.500L1 11.800Z" fill="none" stroke="#1e1e1e" stroke-width="1.300" stroke-linejoin="round"/></svg>
<svg class="b" style="left:74px;top:198.5px" width="8" height="11" viewBox="0 0 8 11"><rect x="0.900" y="4.600" width="6.200" height="5.200" rx="0.600" fill="none" stroke="#1a6fc4" stroke-width="1.500"/><path d="M2.300 4.600V3.200A1.700 1.700 0 0 1 5.700 3.200V4.600" fill="none" stroke="#1a6fc4" stroke-width="1.300"/></svg>
<svg class="b" style="left:86px;top:196px" width="19" height="16" viewBox="0 0 19 16"><path d="M1.200 14.300V1.700H7L9 3.700H17.800V14.300Z" fill="#dcb67a" stroke="#b8913c" stroke-width="1.200"/><path d="M1.200 5.500H8L9.500 3.700" fill="none" stroke="#b8913c" stroke-width="1"/></svg>
<span class="t" style="left:111px;top:193px;font-size:15px;line-height:24px;color:#1e1e1e;letter-spacing:0.362px;">Extensions</span>
<svg class="b" style="left:58.5px;top:221.5px" width="8" height="13" viewBox="0 0 8 13"><path d="M1 1.200L6.300 6.500L1 11.800Z" fill="none" stroke="#1e1e1e" stroke-width="1.300" stroke-linejoin="round"/></svg>
<svg class="b" style="left:74px;top:222.5px" width="8" height="11" viewBox="0 0 8 11"><rect x="0.900" y="4.600" width="6.200" height="5.200" rx="0.600" fill="none" stroke="#1a6fc4" stroke-width="1.500"/><path d="M2.300 4.600V3.200A1.700 1.700 0 0 1 5.700 3.200V4.600" fill="none" stroke="#1a6fc4" stroke-width="1.300"/></svg>
<svg class="b" style="left:86px;top:220px" width="19" height="16" viewBox="0 0 19 16"><path d="M1.200 14.300V1.700H7L9 3.700H17.800V14.300Z" fill="#dcb67a" stroke="#b8913c" stroke-width="1.200"/><path d="M1.200 5.500H8L9.500 3.700" fill="none" stroke="#b8913c" stroke-width="1"/></svg>
<span class="t" style="left:111px;top:217px;font-size:15px;line-height:24px;color:#1e1e1e;letter-spacing:0.688px;">Infrastructure</span>
<svg class="b" style="left:58.5px;top:245.5px" width="8" height="13" viewBox="0 0 8 13"><path d="M1 1.200L6.300 6.500L1 11.800Z" fill="none" stroke="#1e1e1e" stroke-width="1.300" stroke-linejoin="round"/></svg>
<svg class="b" style="left:74px;top:246.5px" width="8" height="11" viewBox="0 0 8 11"><rect x="0.900" y="4.600" width="6.200" height="5.200" rx="0.600" fill="none" stroke="#1a6fc4" stroke-width="1.500"/><path d="M2.300 4.600V3.200A1.700 1.700 0 0 1 5.700 3.200V4.600" fill="none" stroke="#1a6fc4" stroke-width="1.300"/></svg>
<svg class="b" style="left:86px;top:244px" width="19" height="16" viewBox="0 0 19 16"><path d="M1.200 14.300V1.700H7L9 3.700H17.800V14.300Z" fill="#dcb67a" stroke="#b8913c" stroke-width="1.200"/><path d="M1.200 5.500H8L9.500 3.700" fill="none" stroke="#b8913c" stroke-width="1"/></svg>
<span class="t" style="left:111px;top:241px;font-size:15px;line-height:24px;color:#1e1e1e;letter-spacing:0.662px;">IntegrationEvents</span>
<svg class="b" style="left:58.5px;top:269.5px" width="8" height="13" viewBox="0 0 8 13"><path d="M1 1.200L6.300 6.500L1 11.800Z" fill="none" stroke="#1e1e1e" stroke-width="1.300" stroke-linejoin="round"/></svg>
<svg class="b" style="left:74px;top:270.5px" width="8" height="11" viewBox="0 0 8 11"><rect x="0.900" y="4.600" width="6.200" height="5.200" rx="0.600" fill="none" stroke="#1a6fc4" stroke-width="1.500"/><path d="M2.300 4.600V3.200A1.700 1.700 0 0 1 5.700 3.200V4.600" fill="none" stroke="#1a6fc4" stroke-width="1.300"/></svg>
<svg class="b" style="left:86px;top:268px" width="19" height="16" viewBox="0 0 19 16"><path d="M1.200 14.300V1.700H7L9 3.700H17.800V14.300Z" fill="#dcb67a" stroke="#b8913c" stroke-width="1.200"/><path d="M1.200 5.500H8L9.500 3.700" fill="none" stroke="#b8913c" stroke-width="1"/></svg>
<span class="t" style="left:111px;top:265px;font-size:15px;line-height:24px;color:#1e1e1e;letter-spacing:1.428px;">Model</span>
<svg class="b" style="left:58.5px;top:293.5px" width="8" height="13" viewBox="0 0 8 13"><path d="M1 1.200L6.300 6.500L1 11.800Z" fill="none" stroke="#1e1e1e" stroke-width="1.300" stroke-linejoin="round"/></svg>
<svg class="b" style="left:74px;top:294.5px" width="8" height="11" viewBox="0 0 8 11"><rect x="0.900" y="4.600" width="6.200" height="5.200" rx="0.600" fill="none" stroke="#1a6fc4" stroke-width="1.500"/><path d="M2.300 4.600V3.200A1.700 1.700 0 0 1 5.700 3.200V4.600" fill="none" stroke="#1a6fc4" stroke-width="1.300"/></svg>
<svg class="b" style="left:86px;top:292px" width="19" height="16" viewBox="0 0 19 16"><path d="M1.200 14.300V1.700H7L9 3.700H17.800V14.300Z" fill="#dcb67a" stroke="#b8913c" stroke-width="1.200"/><path d="M1.200 5.500H8L9.500 3.700" fill="none" stroke="#b8913c" stroke-width="1"/></svg>
<span class="t" style="left:111px;top:289px;font-size:15px;line-height:24px;color:#1e1e1e;letter-spacing:-0.086px;">Pics</span>
<svg class="b" style="left:58.5px;top:317.5px" width="8" height="13" viewBox="0 0 8 13"><path d="M1 1.200L6.300 6.500L1 11.800Z" fill="none" stroke="#1e1e1e" stroke-width="1.300" stroke-linejoin="round"/></svg>
<svg class="b" style="left:74px;top:318.5px" width="8" height="11" viewBox="0 0 8 11"><rect x="0.900" y="4.600" width="6.200" height="5.200" rx="0.600" fill="none" stroke="#1a6fc4" stroke-width="1.500"/><path d="M2.300 4.600V3.200A1.700 1.700 0 0 1 5.700 3.200V4.600" fill="none" stroke="#1a6fc4" stroke-width="1.300"/></svg>
<svg class="b" style="left:86px;top:316px" width="19" height="16" viewBox="0 0 19 16"><path d="M1.200 14.300V1.700H7L9 3.700H17.800V14.300Z" fill="#dcb67a" stroke="#b8913c" stroke-width="1.200"/><path d="M1.200 5.500H8L9.500 3.700" fill="none" stroke="#b8913c" stroke-width="1"/></svg>
<span class="t" style="left:111px;top:313px;font-size:15px;line-height:24px;color:#1e1e1e;letter-spacing:0.309px;">Services</span>
<svg class="b" style="left:56px;top:343.5px" width="10" height="10" viewBox="0 0 10 10"><path d="M9 0.500V9H0.500Z" fill="#1e1e1e"/></svg>
<svg class="b" style="left:74px;top:342.5px" width="8" height="11" viewBox="0 0 8 11"><rect x="0.900" y="4.600" width="6.200" height="5.200" rx="0.600" fill="none" stroke="#1a6fc4" stroke-width="1.500"/><path d="M2.300 4.600V3.200A1.700 1.700 0 0 1 5.700 3.200V4.600" fill="none" stroke="#1a6fc4" stroke-width="1.300"/></svg>
<svg class="b" style="left:86px;top:340px" width="19" height="16" viewBox="0 0 19 16"><path d="M1.200 14.300V1.700H7L9 3.700H17.800V14.300Z" fill="#dcb67a" stroke="#b8913c" stroke-width="1.200"/><path d="M1.200 5.500H8L9.500 3.700" fill="none" stroke="#b8913c" stroke-width="1"/></svg>
<span class="t" style="left:111px;top:337px;font-size:15px;line-height:24px;color:#1e1e1e;letter-spacing:0.559px;">Setup</span>
<svg class="b" style="left:95.5px;top:366.5px" width="8" height="11" viewBox="0 0 8 11"><rect x="0.900" y="4.600" width="6.200" height="5.200" rx="0.600" fill="none" stroke="#1a6fc4" stroke-width="1.500"/><path d="M2.300 4.600V3.200A1.700 1.700 0 0 1 5.700 3.200V4.600" fill="none" stroke="#1a6fc4" stroke-width="1.300"/></svg>
<svg class="b" style="left:109px;top:363px" width="16" height="19" viewBox="0 0 16 19"><path d="M2.500 1H10.500L15 5.500V16.500A1.500 1.500 0 0 1 13.500 18H2.500A1.500 1.500 0 0 1 1 16.500V2.500A1.500 1.500 0 0 1 2.500 1Z" fill="#f2f2f2" stroke="#6a6a6a" stroke-width="1.500"/><path d="M10.500 1V5.500H15" fill="none" stroke="#6a6a6a" stroke-width="1.200"/></svg>
<span class="t" style="left:111.5px;top:369.5px;font-size:8.5px;line-height:12px;color:#424242;font-weight:bold;letter-spacing:2.500px;">{}</span>
<span class="t" style="left:134px;top:361px;font-size:15px;line-height:24px;color:#1e1e1e;letter-spacing:0.661px;">catalog.json</span>
<svg class="b" style="left:56px;top:391.5px" width="10" height="10" viewBox="0 0 10 10"><path d="M9 0.500V9H0.500Z" fill="#1e1e1e"/></svg>
<svg class="b" style="left:74px;top:390.5px" width="8" height="11" viewBox="0 0 8 11"><rect x="0.900" y="4.600" width="6.200" height="5.200" rx="0.600" fill="none" stroke="#1a6fc4" stroke-width="1.500"/><path d="M2.300 4.600V3.200A1.700 1.700 0 0 1 5.700 3.200V4.600" fill="none" stroke="#1a6fc4" stroke-width="1.300"/></svg>
<svg class="b" style="left:87px;top:387px" width="16" height="19" viewBox="0 0 16 19"><path d="M2.500 1H10.500L15 5.500V16.500A1.500 1.500 0 0 1 13.500 18H2.500A1.500 1.500 0 0 1 1 16.500V2.500A1.500 1.500 0 0 1 2.500 1Z" fill="#f2f2f2" stroke="#6a6a6a" stroke-width="1.500"/><path d="M10.500 1V5.500H15" fill="none" stroke="#6a6a6a" stroke-width="1.200"/></svg>
<span class="t" style="left:89.5px;top:393.5px;font-size:8.5px;line-height:12px;color:#424242;font-weight:bold;letter-spacing:2.500px;">{}</span>
<span class="t" style="left:111px;top:385px;font-size:15px;line-height:24px;color:#1e1e1e;letter-spacing:0.725px;">appsettings.json</span>
<svg class="b" style="left:95.5px;top:414.5px" width="8" height="11" viewBox="0 0 8 11"><rect x="0.900" y="4.600" width="6.200" height="5.200" rx="0.600" fill="none" stroke="#1a6fc4" stroke-width="1.500"/><path d="M2.300 4.600V3.200A1.700 1.700 0 0 1 5.700 3.200V4.600" fill="none" stroke="#1a6fc4" stroke-width="1.300"/></svg>
<svg class="b" style="left:109px;top:411px" width="16" height="19" viewBox="0 0 16 19"><path d="M2.500 1H10.500L15 5.500V16.500A1.500 1.500 0 0 1 13.500 18H2.500A1.500 1.500 0 0 1 1 16.500V2.500A1.500 1.500 0 0 1 2.500 1Z" fill="#f2f2f2" stroke="#6a6a6a" stroke-width="1.500"/><path d="M10.500 1V5.500H15" fill="none" stroke="#6a6a6a" stroke-width="1.200"/></svg>
<span class="t" style="left:111.5px;top:417.5px;font-size:8.5px;line-height:12px;color:#424242;font-weight:bold;letter-spacing:2.500px;">{}</span>
<span class="t" style="left:134px;top:409px;font-size:15px;line-height:24px;color:#1e1e1e;letter-spacing:0.725px;">appsettings.Development.json</span>
<svg class="b" style="left:74px;top:438.5px" width="8" height="11" viewBox="0 0 8 11"><rect x="0.900" y="4.600" width="6.200" height="5.200" rx="0.600" fill="none" stroke="#1a6fc4" stroke-width="1.500"/><path d="M2.300 4.600V3.200A1.700 1.700 0 0 1 5.700 3.200V4.600" fill="none" stroke="#1a6fc4" stroke-width="1.300"/></svg>
<svg class="b" style="left:83.5px;top:436px" width="21" height="20" viewBox="0 0 21 20"><path d="M8 7V2.500H17M17 2.500V6M17 2.500A1.800 1.800 0 0 1 20 3.500V5H17.500M8 2.500V12" fill="none" stroke="#424242" stroke-width="1.300"/><path d="M8 2.500H17V13H13" fill="none" stroke="#424242" stroke-width="1.300"/><circle cx="6.500" cy="13.500" r="5.600" fill="#eaf3fc" stroke="#1a6fc4" stroke-width="1.300"/><path d="M1 13.500H12M6.500 8V19M2.300 10.500H10.700M2.300 16.500H10.700M6.500 8C3.500 10 3.500 17 6.500 19M6.500 8C9.500 10 9.500 17 6.500 19" fill="none" stroke="#1a6fc4" stroke-width="0.900"/></svg>
<span class="t" style="left:111px;top:433px;font-size:15px;line-height:24px;color:#1e1e1e;letter-spacing:0.610px;">Catalog.API.http</span>
<svg class="b" style="left:74px;top:462.5px" width="8" height="11" viewBox="0 0 8 11"><rect x="0.900" y="4.600" width="6.200" height="5.200" rx="0.600" fill="none" stroke="#1a6fc4" stroke-width="1.500"/><path d="M2.300 4.600V3.200A1.700 1.700 0 0 1 5.700 3.200V4.600" fill="none" stroke="#1a6fc4" stroke-width="1.300"/></svg>
<svg class="b" style="left:87px;top:459px" width="16" height="19" viewBox="0 0 16 19"><path d="M2.500 1H10.500L15 5.500V16.500A1.500 1.500 0 0 1 13.500 18H2.500A1.500 1.500 0 0 1 1 16.500V2.500A1.500 1.500 0 0 1 2.500 1Z" fill="#f2f2f2" stroke="#6a6a6a" stroke-width="1.500"/><path d="M10.500 1V5.500H15" fill="none" stroke="#6a6a6a" stroke-width="1.200"/></svg>
<span class="t" style="left:89.5px;top:465.5px;font-size:8.5px;line-height:12px;color:#424242;font-weight:bold;letter-spacing:2.500px;">{}</span>
<span class="t" style="left:111px;top:457px;font-size:15px;line-height:24px;color:#1e1e1e;letter-spacing:0.392px;">Catalog.API.json</span>
<svg class="b" style="left:74px;top:486.5px" width="8" height="11" viewBox="0 0 8 11"><rect x="0.900" y="4.600" width="6.200" height="5.200" rx="0.600" fill="none" stroke="#1a6fc4" stroke-width="1.500"/><path d="M2.300 4.600V3.200A1.700 1.700 0 0 1 5.700 3.200V4.600" fill="none" stroke="#1a6fc4" stroke-width="1.300"/></svg>
<svg class="b" style="left:87px;top:483px" width="16" height="19" viewBox="0 0 16 19"><path d="M2.500 1H10.500L15 5.500V16.500A1.500 1.500 0 0 1 13.500 18H2.500A1.500 1.500 0 0 1 1 16.500V2.500A1.500 1.500 0 0 1 2.500 1Z" fill="#f2f2f2" stroke="#6a6a6a" stroke-width="1.500"/><path d="M10.500 1V5.500H15" fill="none" stroke="#6a6a6a" stroke-width="1.200"/></svg>
<span class="t" style="left:89.5px;top:489.5px;font-size:8.5px;line-height:12px;color:#424242;font-weight:bold;letter-spacing:2.500px;">{}</span>
<span class="t" style="left:111px;top:481px;font-size:15px;line-height:24px;color:#1e1e1e;letter-spacing:0.320px;">Catalog.API_v2.json</span>
<svg class="b" style="left:58.5px;top:509.5px" width="8" height="13" viewBox="0 0 8 13"><path d="M1 1.200L6.300 6.500L1 11.800Z" fill="none" stroke="#1e1e1e" stroke-width="1.300" stroke-linejoin="round"/></svg>
<svg class="b" style="left:74px;top:510.5px" width="8" height="11" viewBox="0 0 8 11"><rect x="0.900" y="4.600" width="6.200" height="5.200" rx="0.600" fill="none" stroke="#1a6fc4" stroke-width="1.500"/><path d="M2.300 4.600V3.200A1.700 1.700 0 0 1 5.700 3.200V4.600" fill="none" stroke="#1a6fc4" stroke-width="1.300"/></svg>
<span class="t" style="left:86.5px;top:509.5px;font-size:13.500px;line-height:16px;color:#2a9c2a;font-weight:bold;letter-spacing:0.500px;">C#</span>
<span class="t" style="left:111px;top:505px;font-size:15px;line-height:24px;color:#1e1e1e;letter-spacing:0.613px;">CatalogOptions.cs</span>
<svg class="b" style="left:74px;top:534.5px" width="8" height="11" viewBox="0 0 8 11"><rect x="0.900" y="4.600" width="6.200" height="5.200" rx="0.600" fill="none" stroke="#1a6fc4" stroke-width="1.500"/><path d="M2.300 4.600V3.200A1.700 1.700 0 0 1 5.700 3.200V4.600" fill="none" stroke="#1a6fc4" stroke-width="1.300"/></svg>
<span class="t" style="left:86.5px;top:533.5px;font-size:13.500px;line-height:16px;color:#2a9c2a;font-weight:bold;letter-spacing:0.500px;">C#</span>
<span class="t" style="left:111px;top:529px;font-size:15px;line-height:24px;color:#1e1e1e;letter-spacing:0.374px;">GlobalUsings.cs</span>
<svg class="b" style="left:58.5px;top:557.5px" width="8" height="13" viewBox="0 0 8 13"><path d="M1 1.200L6.300 6.500L1 11.800Z" fill="none" stroke="#1e1e1e" stroke-width="1.300" stroke-linejoin="round"/></svg>
<svg class="b" style="left:74px;top:558.5px" width="8" height="11" viewBox="0 0 8 11"><rect x="0.900" y="4.600" width="6.200" height="5.200" rx="0.600" fill="none" stroke="#1a6fc4" stroke-width="1.500"/><path d="M2.300 4.600V3.200A1.700 1.700 0 0 1 5.700 3.200V4.600" fill="none" stroke="#1a6fc4" stroke-width="1.300"/></svg>
<span class="t" style="left:86.5px;top:557.5px;font-size:13.500px;line-height:16px;color:#2a9c2a;font-weight:bold;letter-spacing:0.500px;">C#</span>
<span class="t" style="left:111px;top:553px;font-size:15px;line-height:24px;color:#1e1e1e;letter-spacing:0.531px;">Program.cs</span>
<svg class="b" style="left:35.5px;top:581.5px" width="8" height="13" viewBox="0 0 8 13"><path d="M1 1.200L6.300 6.500L1 11.800Z" fill="none" stroke="#1e1e1e" stroke-width="1.300" stroke-linejoin="round"/></svg>
<svg class="b" style="left:50.5px;top:582.5px" width="8" height="11" viewBox="0 0 8 11"><rect x="0.900" y="4.600" width="6.200" height="5.200" rx="0.600" fill="none" stroke="#1a6fc4" stroke-width="1.500"/><path d="M2.300 4.600V3.200A1.700 1.700 0 0 1 5.700 3.200V4.600" fill="none" stroke="#1a6fc4" stroke-width="1.300"/></svg>
<svg class="b" style="left:63px;top:581px" width="18" height="16" viewBox="0 0 18 16"><rect x="0.700" y="0.700" width="16.600" height="14.600" rx="1.500" fill="#f0f0f0" stroke="#6e6e6e" stroke-width="1.300"/></svg>
<span class="t" style="left:65.5px;top:583px;font-size:10.500px;line-height:12px;color:#2a9c2a;font-weight:bold;">C#</span>
<span class="t" style="left:89px;top:577px;font-size:15px;line-height:24px;color:#1e1e1e;letter-spacing:0.884px;">ClientApp</span>
<svg class="b" style="left:35.5px;top:605.5px" width="8" height="13" viewBox="0 0 8 13"><path d="M1 1.200L6.300 6.500L1 11.800Z" fill="none" stroke="#1e1e1e" stroke-width="1.300" stroke-linejoin="round"/></svg>
<svg class="b" style="left:50.5px;top:606.5px" width="8" height="11" viewBox="0 0 8 11"><rect x="0.900" y="4.600" width="6.200" height="5.200" rx="0.600" fill="none" stroke="#1a6fc4" stroke-width="1.500"/><path d="M2.300 4.600V3.200A1.700 1.700 0 0 1 5.700 3.200V4.600" fill="none" stroke="#1a6fc4" stroke-width="1.300"/></svg>
<svg class="b" style="left:60.5px;top:604px" width="21" height="20" viewBox="0 0 21 20"><path d="M4.500 8V1.500H19.500V15.500H13" fill="none" stroke="#424242" stroke-width="1.300"/><path d="M4.500 4H19.500" stroke="#424242" stroke-width="2"/><path d="M6.500 7.500L12.500 18.500H0.500Z" fill="#9b6fe0" stroke="#7a4fc0" stroke-width="0.800"/></svg>
<span class="t" style="left:89px;top:601px;font-size:15px;line-height:24px;color:#1e1e1e;letter-spacing:0.917px;">eShop.AppHost</span>
<svg class="b" style="left:35.5px;top:629.5px" width="8" height="13" viewBox="0 0 8 13"><path d="M1 1.200L6.300 6.500L1 11.800Z" fill="none" stroke="#1e1e1e" stroke-width="1.300" stroke-linejoin="round"/></svg>
<svg class="b" style="left:50.5px;top:630.5px" width="8" height="11" viewBox="0 0 8 11"><rect x="0.900" y="4.600" width="6.200" height="5.200" rx="0.600" fill="none" stroke="#1a6fc4" stroke-width="1.500"/><path d="M2.300 4.600V3.200A1.700 1.700 0 0 1 5.700 3.200V4.600" fill="none" stroke="#1a6fc4" stroke-width="1.300"/></svg>
<svg class="b" style="left:63px;top:629px" width="18" height="16" viewBox="0 0 18 16"><rect x="0.700" y="0.700" width="16.600" height="14.600" rx="1.500" fill="#f0f0f0" stroke="#6e6e6e" stroke-width="1.300"/></svg>
<span class="t" style="left:65.5px;top:631px;font-size:10.500px;line-height:12px;color:#2a9c2a;font-weight:bold;">C#</span>
<span class="t" style="left:89px;top:625px;font-size:15px;line-height:24px;color:#1e1e1e;letter-spacing:0.496px;">eShop.ServiceDefaults</span>
<svg class="b" style="left:35.5px;top:653.5px" width="8" height="13" viewBox="0 0 8 13"><path d="M1 1.200L6.300 6.500L1 11.800Z" fill="none" stroke="#1e1e1e" stroke-width="1.300" stroke-linejoin="round"/></svg>
<svg class="b" style="left:50.5px;top:654.5px" width="8" height="11" viewBox="0 0 8 11"><rect x="0.900" y="4.600" width="6.200" height="5.200" rx="0.600" fill="none" stroke="#1a6fc4" stroke-width="1.500"/><path d="M2.300 4.600V3.200A1.700 1.700 0 0 1 5.700 3.200V4.600" fill="none" stroke="#1a6fc4" stroke-width="1.300"/></svg>
<svg class="b" style="left:63px;top:653px" width="18" height="16" viewBox="0 0 18 16"><rect x="0.700" y="0.700" width="16.600" height="14.600" rx="1.500" fill="#f0f0f0" stroke="#6e6e6e" stroke-width="1.300"/></svg>
<span class="t" style="left:65.5px;top:655px;font-size:10.500px;line-height:12px;color:#2a9c2a;font-weight:bold;">C#</span>
<span class="t" style="left:89px;top:649px;font-size:15px;line-height:24px;color:#1e1e1e;letter-spacing:0.098px;">EventBus</span>
<svg class="b" style="left:35.5px;top:677.5px" width="8" height="13" viewBox="0 0 8 13"><path d="M1 1.200L6.300 6.500L1 11.800Z" fill="none" stroke="#1e1e1e" stroke-width="1.300" stroke-linejoin="round"/></svg>
<svg class="b" style="left:50.5px;top:678.5px" width="8" height="11" viewBox="0 0 8 11"><rect x="0.900" y="4.600" width="6.200" height="5.200" rx="0.600" fill="none" stroke="#1a6fc4" stroke-width="1.500"/><path d="M2.300 4.600V3.200A1.700 1.700 0 0 1 5.700 3.200V4.600" fill="none" stroke="#1a6fc4" stroke-width="1.300"/></svg>
<svg class="b" style="left:63px;top:677px" width="18" height="16" viewBox="0 0 18 16"><rect x="0.700" y="0.700" width="16.600" height="14.600" rx="1.500" fill="#f0f0f0" stroke="#6e6e6e" stroke-width="1.300"/></svg>
<span class="t" style="left:65.5px;top:679px;font-size:10.500px;line-height:12px;color:#2a9c2a;font-weight:bold;">C#</span>
<span class="t" style="left:89px;top:673px;font-size:15px;line-height:24px;color:#1e1e1e;letter-spacing:0.579px;">EventBusRabbitMQ</span>
<svg class="b" style="left:35.5px;top:701.5px" width="8" height="13" viewBox="0 0 8 13"><path d="M1 1.200L6.300 6.500L1 11.800Z" fill="none" stroke="#1e1e1e" stroke-width="1.300" stroke-linejoin="round"/></svg>
<svg class="b" style="left:50.5px;top:702.5px" width="8" height="11" viewBox="0 0 8 11"><rect x="0.900" y="4.600" width="6.200" height="5.200" rx="0.600" fill="none" stroke="#1a6fc4" stroke-width="1.500"/><path d="M2.300 4.600V3.200A1.700 1.700 0 0 1 5.700 3.200V4.600" fill="none" stroke="#1a6fc4" stroke-width="1.300"/></svg>
<svg class="b" style="left:60.5px;top:700px" width="21" height="20" viewBox="0 0 21 20"><path d="M5.500 7V1.500H19.500V15.500H13" fill="none" stroke="#424242" stroke-width="1.300"/><path d="M5.500 4H19.500" stroke="#424242" stroke-width="2"/><circle cx="6.500" cy="13.500" r="5.600" fill="#eaf3fc" stroke="#1a6fc4" stroke-width="1.300"/><path d="M1 13.500H12M6.500 8V19M2.300 10.500H10.700M2.300 16.500H10.700M6.500 8C3.500 10 3.500 17 6.500 19M6.500 8C9.500 10 9.500 17 6.500 19" fill="none" stroke="#1a6fc4" stroke-width="0.900"/></svg>
<span class="t" style="left:89px;top:697px;font-size:15px;line-height:24px;color:#1e1e1e;letter-spacing:1.217px;">HybridApp</span>
<svg class="b" style="left:35.5px;top:725.5px" width="8" height="13" viewBox="0 0 8 13"><path d="M1 1.200L6.300 6.500L1 11.800Z" fill="none" stroke="#1e1e1e" stroke-width="1.300" stroke-linejoin="round"/></svg>
<svg class="b" style="left:50.5px;top:726.5px" width="8" height="11" viewBox="0 0 8 11"><rect x="0.900" y="4.600" width="6.200" height="5.200" rx="0.600" fill="none" stroke="#1a6fc4" stroke-width="1.500"/><path d="M2.300 4.600V3.200A1.700 1.700 0 0 1 5.700 3.200V4.600" fill="none" stroke="#1a6fc4" stroke-width="1.300"/></svg>
<svg class="b" style="left:60.5px;top:724px" width="21" height="20" viewBox="0 0 21 20"><path d="M5.500 7V1.500H19.500V15.500H13" fill="none" stroke="#424242" stroke-width="1.300"/><path d="M5.500 4H19.500" stroke="#424242" stroke-width="2"/><circle cx="6.500" cy="13.500" r="5.600" fill="#eaf3fc" stroke="#1a6fc4" stroke-width="1.300"/><path d="M1 13.500H12M6.500 8V19M2.300 10.500H10.700M2.300 16.500H10.700M6.500 8C3.500 10 3.500 17 6.500 19M6.500 8C9.500 10 9.500 17 6.500 19" fill="none" stroke="#1a6fc4" stroke-width="0.900"/></svg>
<span class="t" style="left:89px;top:721px;font-size:15px;line-height:24px;color:#1e1e1e;letter-spacing:0.701px;">Identity.API</span>
</div>
<div class="b" style="left:1859px;top:179px;width:19px;height:737px;background:#f5f5f5;"></div>
<svg class="b" style="left:1864px;top:187px;" width="10" height="6" viewBox="0 0 10 6"><path d="M0 6L5 0L10 6Z" fill="#868999"/></svg>
<svg class="b" style="left:1864px;top:901px;" width="10" height="6" viewBox="0 0 10 6"><path d="M0 0H10L5 6Z" fill="#868999"/></svg>
<div class="b" style="left:1865px;top:200px;width:10px;height:443px;background:#c2c3c9;"></div>
<div class="b" style="left:1604px;top:916px;width:274px;height:19px;background:#f5f5f5;"></div>
<svg class="b" style="left:1612px;top:920px;" width="7" height="11" viewBox="0 0 7 11"><path d="M7 0V11L0 5.500Z" fill="#868999"/></svg>
<svg class="b" style="left:1845px;top:920px;" width="7" height="11" viewBox="0 0 7 11"><path d="M0 0V11L7 5.500Z" fill="#868999"/></svg>
<div class="b" style="left:1625px;top:920px;width:152px;height:10px;background:#c2c3c9;"></div>
<div class="b" style="left:1859px;top:915px;width:19px;height:21px;background:#eeeef2;"></div>
<div class="b" style="left:1603px;top:936px;width:149px;height:25px;background:#f5f5f5;border:1px solid #cccedb;border-top:none;box-sizing:border-box;"></div>
<span class="t" style="left:1610px;top:937px;font-size:15px;line-height:23px;color:#0e6fc7;letter-spacing:-0.002px;">解决方案资源管理器</span>
<span class="t" style="left:1759px;top:937px;font-size:15px;line-height:23px;color:#1e1e1e;letter-spacing:0.276px;">Git 更改</span>
<span class="t" style="left:1906px;top:88px;font-size:15px;line-height:18px;color:#424242;transform:rotate(90deg);transform-origin:0 0;">属性</span>
<div class="b" style="left:1912px;top:88px;width:8px;height:30px;background:#c8cad8;"></div>
<span class="t" style="left:8px;top:967px;font-size:15px;line-height:23px;color:#424242;letter-spacing:-0.004px;">错误列表</span>
<div class="b" style="left:8px;top:992px;width:60px;height:8px;background:#cccedb;"></div>
<span class="t" style="left:83px;top:967px;font-size:15px;line-height:23px;color:#424242;letter-spacing:-0.004px;">命令窗口</span>
<div class="b" style="left:83px;top:992px;width:60px;height:8px;background:#cccedb;"></div>
<span class="t" style="left:158px;top:967px;font-size:15px;line-height:23px;color:#424242;letter-spacing:-0.008px;">输出</span>
<div class="b" style="left:158px;top:992px;width:30px;height:8px;background:#cccedb;"></div>
<span class="t" style="left:203px;top:967px;font-size:15px;line-height:23px;color:#424242;letter-spacing:-0.002px;">程序包管理器控制台</span>
<div class="b" style="left:203px;top:992px;width:135px;height:8px;background:#cccedb;"></div>
<span class="t" style="left:353px;top:967px;font-size:15px;line-height:23px;color:#424242;letter-spacing:0.664px;">“IConnection”引用</span>
<div class="b" style="left:353px;top:992px;width:130px;height:8px;background:#cccedb;"></div>
<span class="t" style="left:498px;top:967px;font-size:15px;line-height:23px;color:#424242;letter-spacing:0.451px;">CodeLens</span>
<div class="b" style="left:498px;top:992px;width:72px;height:8px;background:#cccedb;"></div>
<span class="t" style="left:585px;top:967px;font-size:15px;line-height:23px;color:#424242;letter-spacing:0.664px;">查找“IConnection”</span>
<div class="b" style="left:585px;top:992px;width:130px;height:8px;background:#cccedb;"></div>
<div class="b" style="left:0px;top:1000px;width:1920px;height:30px;background:#0069c0;"></div>
<svg class="b" style="left:5px;top:1004px;" width="21" height="21" viewBox="0 0 21 21"><path d="M1 1.500H19.500V14.500H11L7 18.500V14.500H1Z" fill="none" stroke="#fff" stroke-width="1.400" stroke-linejoin="round"/></svg>
<span class="t" style="left:35px;top:1004px;font-size:15px;line-height:23px;color:#ffffff;letter-spacing:-0.008px;">就绪</span>
<svg class="b" style="left:1417px;top:1006px;" width="16" height="18" viewBox="0 0 16 18"><path d="M4 17V2M1 5L4 1.500L7 5M12 1V16M9 13L12 16.500L15 13" fill="none" stroke="#fff" stroke-width="1.500"/></svg>
<span class="t" style="left:1443px;top:1003.5px;font-size:15px;line-height:23px;color:#ffffff;letter-spacing:0.362px;">0 / 0</span>
<svg class="b" style="left:1482px;top:1012px;" width="11" height="6" viewBox="0 0 11 6"><path d="M0 6L5.500 0L11 6Z" fill="#fff"/></svg>
<svg class="b" style="left:1521px;top:1006px;" width="17" height="17" viewBox="0 0 17 17"><path d="M2 15L3 11L12.500 1.500A1.800 1.800 0 0 1 15.500 4.500L6 14Z" fill="none" stroke="#fff" stroke-width="1.400" stroke-linejoin="round"/></svg>
<span class="t" style="left:1547px;top:1003.5px;font-size:15px;line-height:23px;color:#ffffff;letter-spacing:0.156px;">18</span>
<svg class="b" style="left:1592px;top:1005px;" width="20" height="21" viewBox="0 0 20 21"><g fill="none" stroke="#fff" stroke-width="1.400"><circle cx="4.500" cy="3.800" r="2.600"/><circle cx="4.500" cy="17" r="2.600"/><circle cx="14" cy="5.500" r="2.600"/><path d="M4.500 6.500V14.500M14 8V9C14 11 4.500 11 4.500 13.500"/></g><circle cx="14.500" cy="15.500" r="4.500" fill="#fff"/><path d="M14.500 18V13.500M12.500 15.300L14.500 13.300L16.500 15.300" fill="none" stroke="#0069c0" stroke-width="1.200"/></svg>
<span class="t" style="left:1618px;top:1004px;font-size:15px;line-height:23px;color:#ffffff;letter-spacing:0.693px;">master</span>
<div class="b" style="left:1690px;top:998.5px;width:236px;height:40px;background:#ffffff;border:1px solid #b9cde6;border-radius:6px;box-sizing:border-box;"></div>
<svg class="b" style="left:1666px;top:990px;" width="46" height="40" viewBox="0 0 46 40"><path d="M5.500 11.500L31 4.300A2.500 2.500 0 0 1 34.200 6L41.500 28.500A2.500 2.500 0 0 1 39.800 31.700L14 40L11 40L2.800 14.600A2.500 2.500 0 0 1 5.500 11.500Z" fill="#f05a20"/></svg>
<span class="t" style="left:1671.500px;top:995px;font-size:37px;line-height:40px;color:#fff;font-weight:bold;font-style:italic;transform:rotate(-9deg) scaleX(1.380);transform-origin:0 50%;">S</span>
<span class="t" style="left:1715px;top:1001.5px;font-size:19px;line-height:27px;color:#1a6fdc;font-weight:bold;">中</span>
<svg class="b" style="left:1746px;top:1006px;" width="20" height="18" viewBox="0 0 20 18"><circle cx="4" cy="5" r="2" fill="none" stroke="#1a6fdc" stroke-width="1.500"/><path d="M11 11.500A1.800 1.800 0 1 1 13 13.500C13 15 12 16 10.500 16.500" fill="#1a6fdc" stroke="#1a6fdc" stroke-width="1"/></svg>
<svg class="b" style="left:1776px;top:1003px;" width="16" height="23" viewBox="0 0 16 23"><rect x="4.500" y="1" width="7" height="12.500" rx="3.500" fill="#1a6fdc"/><path d="M1.500 10C1.500 18 14.500 18 14.500 10M8 16V20.500M5 21H11" fill="none" stroke="#1a6fdc" stroke-width="1.600"/></svg>
<svg class="b" style="left:1805px;top:1006px;" width="20" height="16" viewBox="0 0 20 16"><rect x="1" y="1" width="18" height="14" rx="1.500" fill="none" stroke="#1a6fdc" stroke-width="1.600"/><path d="M1 5.500H19M1 10H19M5.500 1V10M10 1V10M14.500 1V10M5 12.500H15" stroke="#1a6fdc" stroke-width="1.300"/></svg>
<svg class="b" style="left:1833px;top:1005px;" width="22" height="20" viewBox="0 0 22 20"><path d="M6 0.500L9 2.500H13L16 0.500L21.500 4.500L18.500 8.500L17 7.500V19.500H5V7.500L3.500 8.500L0.500 4.500Z" fill="#ff4a1a"/></svg>
<svg class="b" style="left:1865px;top:1006px;" width="20" height="19" viewBox="0 0 20 19"><g fill="#1a6fdc"><rect x="0.500" y="0.500" width="8" height="8" rx="2.500"/><rect x="11" y="0.500" width="8" height="8" rx="4"/><rect x="0.500" y="10.500" width="8" height="8" rx="2.500"/><rect x="11" y="10.500" width="8" height="8" rx="2.500"/></g></svg>
<svg class="b" style="left:1892px;top:1003px;" width="24" height="24" viewBox="0 0 24 24"><circle cx="12" cy="12" r="11.300" fill="#fffdfd" stroke="#f3e4e4" stroke-width="0.800"/><path d="M3 10C6 6 14 4.500 19 6.500L17 12C13 14.500 7 14 3 10Z" fill="#f08a3c"/><circle cx="9" cy="10" r="1.200" fill="#222"/><circle cx="14.500" cy="9" r="1.200" fill="#222"/></svg>
<div class="b" style="left:1907.300px;top:941px;width:9px;height:72px;border-radius:4.500px;background:linear-gradient(#f3f3f7 0%,#eaeaf0 50%,#1fca8c 53%,#1aaee8 100%);"></div>
</body></html>
